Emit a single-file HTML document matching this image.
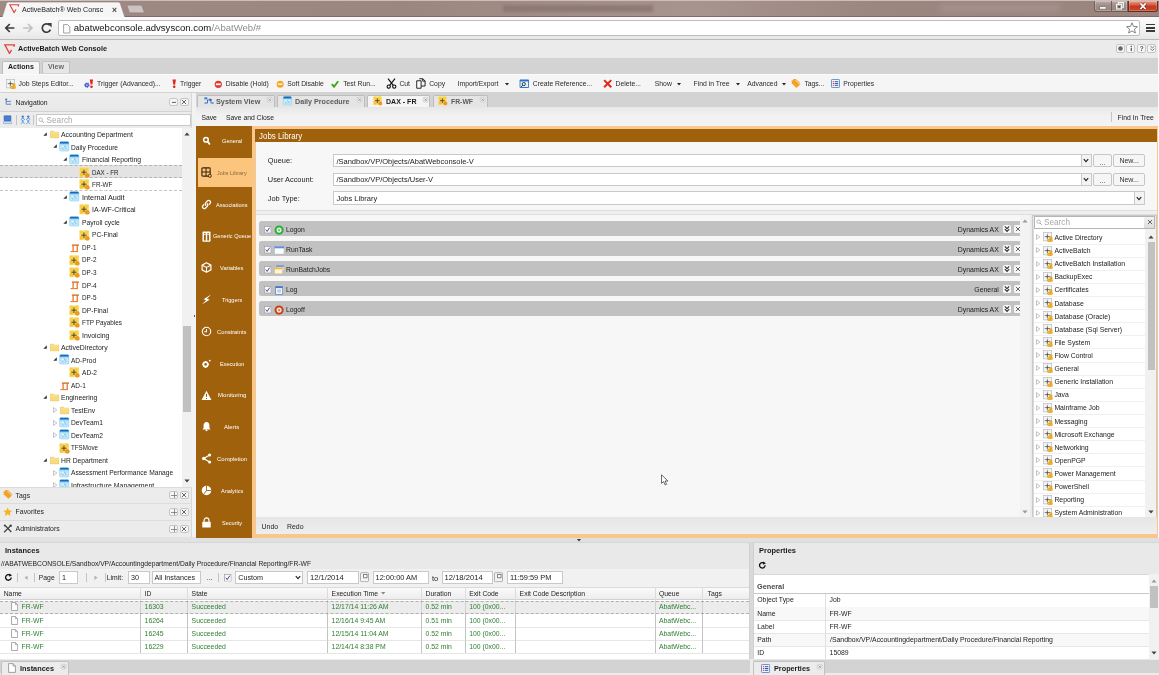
<!DOCTYPE html>
<html><head><meta charset="utf-8"><title>ActiveBatch Web Console</title>
<style>
html,body{margin:0;padding:0;}
body{width:1159px;height:675px;overflow:hidden;position:relative;background:#fff;font-family:"Liberation Sans",sans-serif;font-size:6.8px;color:#222;}
#r{position:absolute;left:0;top:0;width:1159px;height:675px;overflow:hidden;}
#r div,#r span.t,#r svg.i{position:absolute;box-sizing:border-box;}
span.t{white-space:pre;}
svg.i{overflow:visible;}
.btn{background:#f6f6f6;border:1px solid #c6c6c6;border-radius:2px;}
.inp{background:#fff;border:1px solid #c9c9c9;}
</style></head><body>
<svg width="0" height="0" style="position:absolute"><defs>
<linearGradient id="gplan" x1="0" y1="0" x2="0" y2="1"><stop offset="0" stop-color="#bfe3f7"/><stop offset="1" stop-color="#8fcdf0"/></linearGradient>
<symbol id="folder" viewBox="0 0 10 9"><path d="M0.5 1.2 L3.8 1.2 L4.6 2.2 L9.5 2.2 L9.5 8.5 L0.5 8.5 Z" fill="#f8dc7c" stroke="#e3c05a" stroke-width="0.6"/><path d="M0.8 3 H9.2" stroke="#fbeaa8" stroke-width="0.7"/></symbol>
<symbol id="plan" viewBox="0 0 11 11"><rect x="0.2" y="0.2" width="10.6" height="10.6" rx="1.8" fill="#9fdbf5"/><path d="M0.9 2.6 V1.9 Q0.9 0.7 2.1 0.7 H8.9 Q10.1 0.7 10.1 1.9 V2.6 Z" fill="#1969bd"/><rect x="0.9" y="2.6" width="9.2" height="0.6" fill="#3f93d8"/><rect x="1.3" y="3.4" width="8.4" height="6.3" rx="0.5" fill="#c9ebf9"/><rect x="2.3" y="4.3" width="2.9" height="2.6" rx="0.6" fill="#eefaff" stroke="#7fc4ea" stroke-width="0.4"/><rect x="6" y="4.2" width="2.8" height="1.7" fill="#eefaff" stroke="#7fc4ea" stroke-width="0.4"/><path d="M5.2 5.8 H6.8 V8 H8.6 M3.4 7 V8.4 H5.6" stroke="#6ab8e6" stroke-width="0.5" fill="none"/></symbol>
<symbol id="job" viewBox="0 0 10 10"><rect x="0.2" y="0.2" width="9" height="9.2" rx="0.9" fill="#fce58c"/><rect x="0.7" y="0.7" width="3.2" height="3.5" fill="#f9cf45"/><rect x="5.1" y="0.7" width="3.6" height="3.5" fill="#f9cf45"/><rect x="0.7" y="5.4" width="3.2" height="3.5" fill="#f7c433"/><rect x="5.1" y="5.4" width="3.6" height="3.5" fill="#f7c433"/><path d="M4.5 2.2 V7.4 M2 4.8 H7" stroke="#3c2e0c" stroke-width="0.8"/><circle cx="7.7" cy="7.9" r="1.85" fill="#f39a1e" stroke="#dc8412" stroke-width="0.4"/></symbol>
<symbol id="ref" viewBox="0 0 10 9"><rect x="3.2" y="1" width="4.6" height="7" fill="#fff"/><path d="M2 1.1 H9.6" stroke="#c8621e" stroke-width="1.4"/><path d="M3.3 1 V8 M7.7 1 V8" stroke="#e9772c" stroke-width="1.4"/><path d="M0.5 8 H8.4" stroke="#ee7f34" stroke-width="1.4"/></symbol>
<symbol id="lib" viewBox="0 0 10 10"><rect x="0.3" y="0.3" width="8.4" height="8.6" fill="#f4f4f4" stroke="#b4b4b4" stroke-width="0.6"/><path d="M4.4 0.5 V8.8 M0.5 4.6 H8.6" stroke="#c4c4c4" stroke-width="0.7"/><path d="M4.4 2.6 V6.8 M2.2 4.6 H6.8" stroke="#444" stroke-width="0.7"/><circle cx="7.9" cy="5.9" r="1.3" fill="#f9ba2a" stroke="#d18d0a" stroke-width="0.45"/><circle cx="8.2" cy="8.4" r="1.35" fill="#f9ba2a" stroke="#d18d0a" stroke-width="0.45"/><circle cx="5.8" cy="8.4" r="1.35" fill="#f9ba2a" stroke="#d18d0a" stroke-width="0.45"/></symbol>
<symbol id="file" viewBox="0 0 8 10"><path d="M0.6 0.6 H5 L7.4 3 V9.4 H0.6 Z" fill="#fff" stroke="#8a8a8a" stroke-width="0.8"/><path d="M5 0.6 V3 H7.4" fill="none" stroke="#8a8a8a" stroke-width="0.7"/></symbol>
<symbol id="logo" viewBox="0 0 11 10"><path d="M9.6 2.6 L10.4 0.8 H0.8 L5.4 9.2 L7.4 5.8" fill="none" stroke="#e0443a" stroke-width="1.25" stroke-linejoin="miter"/></symbol>
<symbol id="n-search" viewBox="0 0 12 12"><circle cx="5.4" cy="5.2" r="2.5" fill="none" stroke="#fff" stroke-width="1.7"/><path d="M7.2 7.2 L9.2 9.6" stroke="#fff" stroke-width="2" stroke-linecap="round"/></symbol>
<symbol id="n-lib" viewBox="0 0 12 12"><rect x="1" y="1" width="9" height="9" rx="1" fill="none" stroke="#3a2408" stroke-width="1.2"/><path d="M5.5 1 V10 M1 5.5 H10" stroke="#3a2408" stroke-width="1.1"/><circle cx="9.6" cy="9.6" r="1.7" fill="#fbc57d" stroke="#3a2408" stroke-width="1"/></symbol>
<symbol id="n-link" viewBox="0 0 12 12"><path d="M5.2 6.8 a2 2 0 0 1 0 -2.8 l2 -2 a2 2 0 0 1 2.8 2.8 l-1 1" fill="none" stroke="#fff" stroke-width="1.4" stroke-linecap="round"/><path d="M6.8 5.2 a2 2 0 0 1 0 2.8 l-2 2 a2 2 0 0 1 -2.8 -2.8 l1 -1" fill="none" stroke="#fff" stroke-width="1.4" stroke-linecap="round"/></symbol>
<symbol id="n-queue" viewBox="0 0 12 12"><rect x="1.6" y="0.6" width="8.8" height="11" rx="1" fill="#fff"/><rect x="3.2" y="2.4" width="2" height="8" fill="#a0610d"/><rect x="6.8" y="2.4" width="2" height="8" fill="#a0610d"/><rect x="3.2" y="3.6" width="2" height="0.8" fill="#fff"/><rect x="6.8" y="3.6" width="2" height="0.8" fill="#fff"/></symbol>
<symbol id="n-cube" viewBox="0 0 12 12"><path d="M6 0.8 L10.8 3.4 V8.6 L6 11.2 L1.2 8.6 V3.4 Z" fill="none" stroke="#fff" stroke-width="1.3" stroke-linejoin="round"/><path d="M1.4 3.5 L6 6 L10.6 3.5 M6 6 V11" fill="none" stroke="#fff" stroke-width="1.1"/></symbol>
<symbol id="n-bolt" viewBox="0 0 12 12"><path d="M11 0.6 L2.8 5.8 L5.6 6.8 L0.8 11.4 L9.4 6.4 L6.6 5.2 Z" fill="#fff"/></symbol>
<symbol id="n-clock" viewBox="0 0 12 12"><circle cx="6" cy="6" r="4.6" fill="none" stroke="#fff" stroke-width="1.2"/><path d="M6 3.2 V6.2 H3.6" fill="none" stroke="#fff" stroke-width="1.1"/></symbol>
<symbol id="n-gear" viewBox="0 0 12 12"><circle cx="5" cy="7" r="2.4" fill="none" stroke="#fff" stroke-width="1.9"/><circle cx="9.6" cy="2.8" r="1" fill="#fff"/><path d="M5 3.4 V4.4 M5 9.6 V10.6 M1.4 7 H2.4 M7.6 7 H8.6" stroke="#fff" stroke-width="1.4"/></symbol>
<symbol id="n-warn" viewBox="0 0 12 12"><path d="M6 0.8 L11.4 10.8 H0.6 Z" fill="#fff"/><path d="M6 4 V7.6 M6 8.6 V9.8" stroke="#a0610d" stroke-width="1.2"/></symbol>
<symbol id="n-bell" viewBox="0 0 12 12"><path d="M6 1 C3.6 1 2.8 3 2.8 5 V7.6 L1.6 9.2 H10.4 L9.2 7.6 V5 C9.2 3 8.4 1 6 1 Z" fill="#fff"/><circle cx="6" cy="10.2" r="1.1" fill="#fff"/></symbol>
<symbol id="n-share" viewBox="0 0 12 12"><path d="M9.4 2.2 L3 6 L9.4 9.8" fill="none" stroke="#fff" stroke-width="1.4"/><circle cx="9.4" cy="2.2" r="1.7" fill="#fff"/><circle cx="3" cy="6" r="1.9" fill="#fff"/><circle cx="9.4" cy="9.8" r="1.7" fill="#fff"/></symbol>
<symbol id="n-pie" viewBox="0 0 12 12"><circle cx="6" cy="6" r="5.2" fill="#fff"/><path d="M6 0.8 V6 H11.2 M6 6 L3.4 9.6" stroke="#a0610d" stroke-width="1" fill="none"/></symbol>
<symbol id="n-lock" viewBox="0 0 12 12"><rect x="1.4" y="5.2" width="9.2" height="6.2" rx="0.6" fill="#fff"/><path d="M3.4 5.4 V3.6 a2.6 2.6 0 0 1 5.2 0 V5.4" fill="none" stroke="#fff" stroke-width="1.3"/></symbol>
<symbol id="chev2" viewBox="0 0 8 8"><path d="M1.8 1.4 L4 3.6 L6.2 1.4 M1.8 4.2 L4 6.4 L6.2 4.2" fill="none" stroke="#333" stroke-width="1.1"/></symbol>
<symbol id="xx" viewBox="0 0 8 8"><path d="M1.9 1.9 L6.1 6.1 M6.1 1.9 L1.9 6.1" stroke="#4a4a4a" stroke-width="0.85"/></symbol>
<symbol id="plus" viewBox="0 0 8 8"><path d="M4 1.4 V6.6 M1.4 4 H6.6" stroke="#666" stroke-width="0.7" shape-rendering="crispEdges"/></symbol>
<symbol id="minus" viewBox="0 0 8 8"><path d="M2 4.4 H6" stroke="#555" stroke-width="0.9"/></symbol>
<symbol id="chk" viewBox="0 0 8 8"><rect x="0.4" y="0.4" width="7.2" height="7.2" fill="#f8f8f8" stroke="#9a9a9a" stroke-width="0.7"/><path d="M1.9 4 L3.4 5.9 L6.1 1.8" fill="none" stroke="#2a3f9c" stroke-width="1"/></symbol>
<symbol id="refresh" viewBox="0 0 10 10"><path d="M8.2 5 a3.2 3.2 0 1 1 -1.2 -2.5" fill="none" stroke="#111" stroke-width="1.5"/><path d="M5.8 0.6 L9.2 2.6 L6 4.4 Z" fill="#111"/></symbol>
<symbol id="mag" viewBox="0 0 8 8"><circle cx="3.2" cy="3.2" r="2.1" fill="none" stroke="#999" stroke-width="0.8"/><path d="M4.8 4.8 L7.2 7.2" stroke="#999" stroke-width="1"/></symbol>
<symbol id="combo" viewBox="0 0 10 13"><path d="M2.8 5.2 L5 7.6 L7.2 5.2" fill="none" stroke="#222" stroke-width="1.2"/></symbol>
<symbol id="cal" viewBox="0 0 9 10"><rect x="0.5" y="0.5" width="8" height="9" rx="1" fill="#f4f4f4" stroke="#9c9c9c" stroke-width="0.8"/><rect x="3.6" y="2.2" width="3.4" height="3.4" fill="#fff" stroke="#666" stroke-width="0.8"/></symbol>
<symbol id="cursor" viewBox="0 0 9 13"><path d="M0.6 0.6 V10 L2.8 8 L4.6 11.8 L6.2 11 L4.4 7.4 H7.6 Z" fill="#fff" stroke="#333" stroke-width="0.8" stroke-linejoin="round"/></symbol>
<symbol id="ti-steps" viewBox="0 0 10 10"><use href="#lib"/></symbol>
<symbol id="ti-trigadv" viewBox="0 0 10 10"><circle cx="3" cy="6.4" r="2.2" fill="#4d63d2" stroke="#4d63d2" stroke-width="1.2" stroke-dasharray="1.1 0.9"/><circle cx="3" cy="6.4" r="0.9" fill="#aab6ee"/><path d="M6 0.5 H9.4 L8.7 5.8 H6.9 Z" fill="#e3261a"/><circle cx="7.8" cy="8.1" r="1.35" fill="#e3261a"/></symbol>
<symbol id="ti-trig" viewBox="0 0 4.4 10"><path d="M0.4 0.4 H4 L3.2 6 H1.3 Z" fill="#e3261a"/><circle cx="2.2" cy="8.3" r="1.4" fill="#e3261a"/></symbol>
<symbol id="ti-dis" viewBox="0 0 10 10"><circle cx="5" cy="5" r="4.2" fill="#e03a34"/><rect x="2.2" y="4" width="5.6" height="2" fill="#fff"/></symbol>
<symbol id="ti-soft" viewBox="0 0 10 10"><circle cx="5" cy="5" r="4.2" fill="#f5a623"/><rect x="2.2" y="4" width="5.6" height="2" fill="#fdf0d0"/></symbol>
<symbol id="ti-check" viewBox="0 0 10 10"><path d="M1 5.2 L3.8 8.4 L9 1.6" fill="none" stroke="#38a616" stroke-width="2.3"/></symbol>
<symbol id="ti-cut" viewBox="0 0 12 12"><path d="M2.2 0.8 L8 8 M9.8 0.8 L4 8" stroke="#111" stroke-width="1.3"/><circle cx="3" cy="9.4" r="1.8" fill="none" stroke="#111" stroke-width="1.2"/><circle cx="9" cy="9.4" r="1.8" fill="none" stroke="#111" stroke-width="1.2"/></symbol>
<symbol id="ti-copy" viewBox="0 0 11 12"><path d="M0.8 3 H5.6 V11.2 H0.8 Z" fill="#fff" stroke="#111" stroke-width="1"/><path d="M3.6 0.8 H7.6 L10 3.2 V8.8 H5.8 M7.4 0.8 V3.4 H10" fill="none" stroke="#111" stroke-width="1"/></symbol>
<symbol id="ti-ref" viewBox="0 0 11 10"><rect x="0.5" y="0.5" width="10" height="9" rx="1" fill="#2a6fc0"/><rect x="1.4" y="2.6" width="8.2" height="6" fill="#e8f1fb"/><circle cx="5" cy="5.4" r="1.7" fill="none" stroke="#123" stroke-width="0.9"/><path d="M3.8 6.6 L2.2 8.4" stroke="#123" stroke-width="1"/></symbol>
<symbol id="ti-del" viewBox="0 0 10 10"><path d="M1.2 1.2 L8.8 8.8 M8.8 1.2 L1.2 8.8" stroke="#e02a1a" stroke-width="2.2"/></symbol>
<symbol id="ti-tags" viewBox="0 0 10 10"><path d="M0.6 1.6 L4 0.8 L9.4 6 L5.6 9.4 L0.8 4.4 Z" fill="#f5a21e"/><path d="M2.4 0.6 L5 0.4 L9.8 5" fill="none" stroke="#e88a10" stroke-width="0.9"/></symbol>
<symbol id="ti-props" viewBox="0 0 10 10"><rect x="0.5" y="0.5" width="9" height="9" rx="0.9" fill="#f2f5fc" stroke="#4a72c0" stroke-width="0.9"/><path d="M2 3 H3.3 M2 5 H3.3 M2 7 H3.3" stroke="#d03a3a" stroke-width="1.1"/><path d="M4.1 3 H8 M4.1 5 H8 M4.1 7 H8" stroke="#2f55b0" stroke-width="1.1"/></symbol>
<symbol id="ti-star" viewBox="0 0 10 10"><path d="M5 0.4 L6.4 3.6 L9.8 3.9 L7.2 6.2 L8 9.6 L5 7.8 L2 9.6 L2.8 6.2 L0.2 3.9 L3.6 3.6 Z" fill="#f8b21c"/></symbol>
<symbol id="ti-admin" viewBox="0 0 10 10"><path d="M1.2 8.8 L8 2 M2 1.4 L8.8 8.6" stroke="#444" stroke-width="1.4"/><circle cx="8.2" cy="1.8" r="1.3" fill="#444"/><circle cx="1.8" cy="1.6" r="1" fill="#444"/></symbol>
<symbol id="ti-nav" viewBox="0 0 8 9"><path d="M1.4 0.6 V7 H6 M1.4 3.6 H6" fill="none" stroke="#3a64b8" stroke-width="0.9"/><rect x="0.4" y="0.2" width="2.2" height="1.6" fill="#3a64b8"/><rect x="5" y="2.8" width="2.4" height="1.6" fill="#7aa0dc"/><rect x="5" y="6.2" width="2.4" height="1.6" fill="#7aa0dc"/></symbol>
<symbol id="ti-comp" viewBox="0 0 10 10"><rect x="1.2" y="0.6" width="7.6" height="5.8" rx="0.6" fill="#4a7ed0" stroke="#2f5aa8" stroke-width="0.6"/><rect x="0.4" y="7.2" width="9.2" height="2.2" rx="0.8" fill="#dfe8f6" stroke="#5a82c8" stroke-width="0.6"/></symbol>
<symbol id="ti-people" viewBox="0 0 12 10"><circle cx="3" cy="1.6" r="1.3" fill="#3d7fd0"/><circle cx="9" cy="1.6" r="1.3" fill="#3d7fd0"/><path d="M0.8 5 L3 3.2 L5.2 5 M6.8 5 L9 3.2 L11.2 5" fill="none" stroke="#3d7fd0" stroke-width="1"/><circle cx="3" cy="6.4" r="1.2" fill="#5a9ae0"/><circle cx="9" cy="6.4" r="1.2" fill="#5a9ae0"/><path d="M0.8 9.6 L3 7.8 L5.2 9.6 M6.8 9.6 L9 7.8 L11.2 9.6" fill="none" stroke="#5a9ae0" stroke-width="1"/></symbol>
<symbol id="ti-sysview" viewBox="0 0 12 10"><path d="M1 7.6 H4 V4 H8 V7.6 H11" fill="none" stroke="#2a5fb4" stroke-width="1"/><rect x="0.4" y="1" width="3.4" height="2.4" fill="#3d7fd0"/><path d="M6.4 2 L9.6 3.8 L6.4 5.6 Z" fill="#2a5fb4"/><rect x="0.6" y="6.6" width="3" height="2" fill="#7aa8e4"/><rect x="8.4" y="6.6" width="3" height="2" fill="#7aa8e4"/></symbol>
<symbol id="s-on" viewBox="0 0 10 10"><circle cx="5" cy="5" r="4.5" fill="#2cae3c"/><circle cx="5" cy="5" r="2.5" fill="#dff5df"/><path d="M3.6 4.4 L5 6.2 L6.4 4.4 Z" fill="#2cae3c"/></symbol>
<symbol id="s-off" viewBox="0 0 10 10"><circle cx="5" cy="5" r="4.5" fill="#c8431c"/><circle cx="5" cy="5" r="2.5" fill="#fbe6dc"/><path d="M3.6 4.4 L5 6.2 L6.4 4.4 Z" fill="#c8431c"/></symbol>
<symbol id="s-task" viewBox="0 0 11 9"><rect x="0.4" y="0.4" width="10.2" height="8.2" rx="0.8" fill="#fdfdfd" stroke="#9ab0d0" stroke-width="0.6"/><rect x="0.4" y="0.4" width="10.2" height="2" fill="#5d8fdc"/></symbol>
<symbol id="s-batch" viewBox="0 0 11 10"><rect x="2.4" y="0.4" width="8" height="6" fill="#fdfdfd" stroke="#9ab0d0" stroke-width="0.5"/><rect x="2.4" y="0.4" width="8" height="1.6" fill="#5d8fdc"/><rect x="0.4" y="2.8" width="8.6" height="6.6" fill="#fff6dc" stroke="#d8b060" stroke-width="0.5"/><rect x="0.4" y="2.8" width="8.6" height="1.8" fill="#f5b93c"/></symbol>
<symbol id="s-log" viewBox="0 0 9 10"><rect x="0.5" y="0.5" width="8" height="9" rx="0.6" fill="#f2f6fc" stroke="#4a78c8" stroke-width="0.8"/><rect x="0.5" y="0.5" width="8" height="1.8" fill="#4a78c8"/><path d="M2.4 4.6 H6.6 M2.4 6.6 H6.6" stroke="#7a9ad4" stroke-width="0.8"/></symbol>
</defs></svg>
<div id="r">
<div style="left:0.00px;top:0.00px;width:1159.00px;height:17.20px;background:linear-gradient(90deg,#a08983 0%,#9b8680 35%,#a8948e 60%,#9b8680 75%,#9a847e 100%);"></div>
<div style="left:0.00px;top:0.00px;width:1159.00px;height:1.00px;background:#cbbfbb;"></div>
<div style="left:0.00px;top:16.10px;width:1159.00px;height:0.90px;background:#7d6c68;"></div>
<div style="left:503.00px;top:5.00px;width:150.00px;height:7.00px;background:#8b7771;filter:blur(1.6px);opacity:0.85;"></div>
<div style="left:940.00px;top:4.00px;width:120.00px;height:8.00px;background:#a89690;filter:blur(3px);opacity:0.8;"></div>
<svg class="i" style="left:0;top:0" width="150" height="18"><path d="M2 17.6 L6.5 3.2 Q7 2 8.5 2 L118 2 Q119.6 2 120.2 3.2 L125 17.6" fill="#f6f6f6" stroke="#8a7a76" stroke-width="0.6"/><path d="M127 5.2 L140.6 5.2 Q141.6 5.2 142 6.2 L144.4 12.8 L130.6 12.8 Q129.6 12.8 129.2 11.8 Z" fill="#cbc4c2" stroke="#8d7f7b" stroke-width="0.5"/></svg>
<svg class="i" style="left:8.60px;top:4.40px;" width="10.40" height="9.40"><use href="#logo"/></svg>
<span class="t" style="left:22.00px;top:5.88px;font-size:7.1px;line-height:9.23px;color:#222;">ActiveBatch® Web Consc</span>
<span class="t" style="left:112.00px;top:4.97px;font-size:8.5px;line-height:11.05px;color:#444;font-weight:bold;">×</span>
<div style="left:1094.00px;top:0.80px;width:34.00px;height:11.60px;background:linear-gradient(#b9a9a4,#a08d88 45%,#978580);border:1px solid #6e5f5b;border-top:none;border-radius:0 0 0 3px;box-shadow:inset 0 0 0 0.7px rgba(255,255,255,0.35);"></div>
<div style="left:1111.00px;top:0.80px;width:1.00px;height:11.40px;background:#6e5f5b;"></div>
<svg class="i" style="left:1094px;top:0" width="64" height="13"><rect x="5.6" y="6.6" width="6.6" height="2.6" rx="0.6" fill="#fff" stroke="#5a4c48" stroke-width="0.6"/><rect x="24.4" y="2.6" width="5" height="4.6" fill="none" stroke="#f4f4f4" stroke-width="1.1"/><rect x="22.6" y="4.4" width="5" height="4.6" fill="#a59590" stroke="#f4f4f4" stroke-width="1.1"/><rect x="24.3" y="6" width="1.6" height="1.6" fill="#4a3e3a"/></svg>
<div style="left:1128.00px;top:0.80px;width:29.60px;height:11.60px;background:linear-gradient(#e9a08c,#d9593c 40%,#c23a1f 55%,#c9492c);border:1px solid #6e2a20;border-top:none;border-radius:0 0 3px 0;box-shadow:inset 0 0 0 0.7px rgba(255,255,255,0.3);"></div>
<svg class="i" style="left:1128px;top:0" width="30" height="13"><path d="M12.4 3.4 L17.6 9 M17.6 3.4 L12.4 9" stroke="#5a2018" stroke-width="2.8"/><path d="M12.4 3.4 L17.6 9 M17.6 3.4 L12.4 9" stroke="#fff" stroke-width="1.8"/></svg>
<div style="left:0.00px;top:16.90px;width:1159.00px;height:23.10px;background:linear-gradient(#fafafa,#f1f1f1 60%,#e6e6e6);"></div>
<div style="left:0.00px;top:39.40px;width:1159.00px;height:0.90px;background:#b9b9b9;"></div>
<svg class="i" style="left:0;top:17px" width="60" height="23"><path d="M5.8 11 H14.4 M9.8 7 L5.8 11 L9.8 15" fill="none" stroke="#3c3c3c" stroke-width="1.7"/><path d="M23 11 H32 M28 7 L32 11 L28 15" fill="none" stroke="#c2c2c2" stroke-width="1.7"/><path d="M49.6 8.2 A4.2 4.2 0 1 0 50.4 12.6" fill="none" stroke="#3c3c3c" stroke-width="1.7"/><path d="M47.2 6 L51.6 6 L51.6 10.6 Z" fill="#3c3c3c"/></svg>
<div style="left:58.00px;top:19.60px;width:1081.60px;height:16.40px;background:#fff;border:1px solid #bdbdbd;border-radius:2px;"></div>
<svg class="i" style="left:62.5px;top:23.5px" width="8" height="10"><path d="M0.6 0.6 H4.6 L6.8 2.8 V9 H0.6 Z" fill="#fff" stroke="#8c8c8c" stroke-width="0.8"/></svg>
<span class="t" style="left:73.80px;top:21.99px;font-size:9.55px;line-height:12.42px;color:#111;">abatwebconsole.advsyscon.com</span>
<span class="t" style="left:211.40px;top:21.99px;font-size:9.55px;line-height:12.42px;color:#8c8c8c;">/AbatWeb/#</span>
<svg class="i" style="left:1125.5px;top:22px" width="12" height="12"><path d="M6 0.8 L7.5 4.4 L11.4 4.7 L8.4 7.2 L9.4 11 L6 8.9 L2.6 11 L3.6 7.2 L0.6 4.7 L4.5 4.4 Z" fill="#fff" stroke="#666" stroke-width="0.8"/></svg>
<div style="left:1146.40px;top:23.60px;width:8.20px;height:1.70px;background:#3a3a3a;"></div>
<div style="left:1146.40px;top:26.90px;width:8.20px;height:1.70px;background:#3a3a3a;"></div>
<div style="left:1146.40px;top:30.10px;width:8.20px;height:1.70px;background:#3a3a3a;"></div>
<div style="left:0.00px;top:40.30px;width:1159.00px;height:17.90px;background:#ebebeb;"></div>
<svg class="i" style="left:4.00px;top:43.60px;" width="11.20" height="10.20"><use href="#logo"/></svg>
<span class="t" style="left:18.00px;top:43.92px;font-size:7.2px;line-height:9.36px;color:#1a1a1a;font-weight:bold;transform:scaleX(1.0007);transform-origin:0 50%;">ActiveBatch Web Console</span>
<div class="btn" style="left:1115.50px;top:44.40px;width:9.00px;height:9.00px;"></div>
<div class="btn" style="left:1126.30px;top:44.40px;width:9.00px;height:9.00px;"></div>
<div class="btn" style="left:1136.80px;top:44.40px;width:9.00px;height:9.00px;"></div>
<div class="btn" style="left:1147.40px;top:44.40px;width:9.00px;height:9.00px;"></div>
<svg class="i" style="left:1115.5px;top:44.4px" width="42" height="9"><circle cx="4.5" cy="4.5" r="2.3" fill="#666"/><path d="M15.3 1.8 V3 M15.3 3.8 V7" stroke="#555" stroke-width="1.2"/><text x="23.8" y="7" font-size="6.4" font-weight="bold" fill="#555" font-family="Liberation Sans">?</text><path d="M34.4 2.2 L36.4 3.8 L38.4 2.2 M34.4 4.8 L36.4 6.4 L38.4 4.8" fill="none" stroke="#555" stroke-width="0.8"/></svg>
<div style="left:0.00px;top:58.20px;width:1157.60px;height:16.00px;background:#d3d3d3;"></div>
<div style="left:2.00px;top:60.60px;width:37.60px;height:13.20px;background:#f5f5f5;border:1px solid #bcbcbc;border-bottom:none;border-radius:2px 2px 0 0;"></div>
<span class="t" style="left:8.00px;top:62.02px;font-size:7.2px;line-height:9.36px;color:#1a1a1a;font-weight:bold;transform:scaleX(0.9788);transform-origin:0 50%;">Actions</span>
<div style="left:42.00px;top:61.20px;width:28.00px;height:12.30px;background:#e6e6e6;border:1px solid #c2c2c2;border-bottom:none;border-radius:2px 2px 0 0;"></div>
<span class="t" style="left:48.00px;top:62.02px;font-size:7.2px;line-height:9.36px;color:#6a6a6a;font-weight:bold;transform:scaleX(0.9846);transform-origin:0 50%;">View</span>
<div style="left:0.00px;top:74.10px;width:1157.60px;height:18.30px;background:#f5f5f5;border-top:1px solid #fbfbfb;"></div>
<svg class="i" style="left:6.00px;top:78.80px;" width="10.00" height="10.00"><use href="#lib"/></svg>
<span class="t" style="left:18.60px;top:80.28px;font-size:6.8px;line-height:8.84px;color:#2a2a2a;">Job Steps Editor...</span>
<svg class="i" style="left:84.40px;top:79.00px;" width="9.60" height="9.60"><use href="#ti-trigadv"/></svg>
<span class="t" style="left:97.00px;top:80.28px;font-size:6.8px;line-height:8.84px;color:#2a2a2a;">Trigger (Advanced)...</span>
<svg class="i" style="left:172.00px;top:79.10px;" width="4.40" height="9.40"><use href="#ti-trig"/></svg>
<span class="t" style="left:180.00px;top:80.28px;font-size:6.8px;line-height:8.84px;color:#2a2a2a;">Trigger</span>
<svg class="i" style="left:213.80px;top:79.50px;" width="8.60" height="8.60"><use href="#ti-dis"/></svg>
<span class="t" style="left:225.80px;top:80.28px;font-size:6.8px;line-height:8.84px;color:#2a2a2a;">Disable (Hold)</span>
<svg class="i" style="left:275.60px;top:79.60px;" width="8.40" height="8.40"><use href="#ti-soft"/></svg>
<span class="t" style="left:287.20px;top:80.28px;font-size:6.8px;line-height:8.84px;color:#2a2a2a;">Soft Disable</span>
<svg class="i" style="left:331.40px;top:79.80px;" width="8.00" height="8.00"><use href="#ti-check"/></svg>
<span class="t" style="left:343.20px;top:80.28px;font-size:6.8px;line-height:8.84px;color:#2a2a2a;">Test Run...</span>
<svg class="i" style="left:385.60px;top:78.30px;" width="11.00" height="11.00"><use href="#ti-cut"/></svg>
<span class="t" style="left:399.40px;top:80.28px;font-size:6.8px;line-height:8.84px;color:#2a2a2a;">Cut</span>
<svg class="i" style="left:416.00px;top:78.30px;" width="10.00" height="11.00"><use href="#ti-copy"/></svg>
<span class="t" style="left:429.20px;top:80.28px;font-size:6.8px;line-height:8.84px;color:#2a2a2a;">Copy</span>
<span class="t" style="left:457.60px;top:80.28px;font-size:6.8px;line-height:8.84px;color:#2a2a2a;">Import/Export</span>
<svg class="i" style="left:519.00px;top:79.10px;" width="10.60" height="9.40"><use href="#ti-ref"/></svg>
<span class="t" style="left:532.80px;top:80.28px;font-size:6.8px;line-height:8.84px;color:#2a2a2a;">Create Reference...</span>
<svg class="i" style="left:603.00px;top:79.10px;" width="9.40" height="9.40"><use href="#ti-del"/></svg>
<span class="t" style="left:615.60px;top:80.28px;font-size:6.8px;line-height:8.84px;color:#2a2a2a;">Delete...</span>
<span class="t" style="left:654.80px;top:80.28px;font-size:6.8px;line-height:8.84px;color:#2a2a2a;">Show</span>
<span class="t" style="left:693.60px;top:80.28px;font-size:6.8px;line-height:8.84px;color:#2a2a2a;">Find in Tree</span>
<span class="t" style="left:747.20px;top:80.28px;font-size:6.8px;line-height:8.84px;color:#2a2a2a;">Advanced</span>
<svg class="i" style="left:791.20px;top:79.00px;" width="9.60" height="9.60"><use href="#ti-tags"/></svg>
<span class="t" style="left:804.40px;top:80.28px;font-size:6.8px;line-height:8.84px;color:#2a2a2a;">Tags...</span>
<svg class="i" style="left:830.80px;top:79.30px;" width="9.00" height="9.00"><use href="#ti-props"/></svg>
<span class="t" style="left:843.20px;top:80.28px;font-size:6.8px;line-height:8.84px;color:#2a2a2a;">Properties</span>
<svg class="i" style="left:505.4px;top:83.0px" width="4" height="3"><path d="M0 0 H4 L2 2.4 Z" fill="#222"/></svg>
<svg class="i" style="left:676.6px;top:83.0px" width="4" height="3"><path d="M0 0 H4 L2 2.4 Z" fill="#222"/></svg>
<svg class="i" style="left:735.6px;top:83.0px" width="4" height="3"><path d="M0 0 H4 L2 2.4 Z" fill="#222"/></svg>
<svg class="i" style="left:782.0px;top:83.0px" width="4" height="3"><path d="M0 0 H4 L2 2.4 Z" fill="#222"/></svg>
<div style="left:0.00px;top:92.40px;width:1157.60px;height:15.80px;background:#d3d3d3;"></div>
<div style="left:0.00px;top:92.50px;width:196.00px;height:35.50px;background:#f2f2f2;"></div>
<div style="left:0.00px;top:93.20px;width:192.20px;height:18.60px;background:linear-gradient(#eeeeee,#e8e8e8);border-bottom:1px solid #d2d2d2;border-right:1px solid #d8d8d8;"></div>
<svg class="i" style="left:4.80px;top:98.20px;" width="6.60" height="8.40"><use href="#ti-nav"/></svg>
<span class="t" style="left:15.50px;top:98.98px;font-size:6.8px;line-height:8.84px;color:#222;">Navigation</span>
<div class="btn" style="left:169.40px;top:98.30px;width:8.40px;height:8.20px;"></div>
<svg class="i" style="left:169.60px;top:98.40px;" width="8.00" height="8.00"><use href="#minus"/></svg>
<div class="btn" style="left:180.00px;top:98.30px;width:8.60px;height:8.20px;"></div>
<svg class="i" style="left:180.30px;top:98.40px;" width="8.00" height="8.00"><use href="#xx"/></svg>
<div style="left:0.00px;top:111.80px;width:192.20px;height:16.00px;background:#ececec;border-right:1px solid #d8d8d8;"></div>
<svg class="i" style="left:3.40px;top:115.00px;" width="9.00" height="9.40"><use href="#ti-comp"/></svg>
<div style="left:16.40px;top:115.00px;width:0.80px;height:9.60px;background:#c4c4c4;"></div>
<svg class="i" style="left:19.60px;top:115.00px;" width="11.00" height="9.40"><use href="#ti-people"/></svg>
<div style="left:33.00px;top:115.00px;width:0.80px;height:9.60px;background:#c4c4c4;"></div>
<div class="inp" style="left:36.40px;top:114.20px;width:154.40px;height:11.60px;"></div>
<svg class="i" style="left:38.40px;top:116.60px;" width="6.60" height="6.60"><use href="#mag"/></svg>
<span class="t" style="left:46.60px;top:115.57px;font-size:8.2px;line-height:10.66px;color:#a8a8a8;">Search</span>
<div style="left:197.40px;top:94.80px;width:77.40px;height:13.60px;background:#e5e5e5;border:1px solid #bdbdbd;border-bottom:none;border-radius:2px 2px 0 0;"></div>
<svg class="i" style="left:204.00px;top:95.80px;" width="10.40" height="9.60"><use href="#ti-sysview"/></svg>
<span class="t" style="left:215.70px;top:96.82px;font-size:7.2px;line-height:9.36px;color:#5a5a5a;font-weight:bold;transform:scaleX(1.0108);transform-origin:0 50%;">System View</span>
<svg class="i" style="left:267.0px;top:97.4px" width="5.4" height="5.4"><rect x="0.3" y="0.3" width="4.8" height="4.8" rx="0.8" fill="#eee" stroke="#bbb" stroke-width="0.5"/><path d="M1.5 1.5 L3.9 3.9 M3.9 1.5 L1.5 3.9" stroke="#777" stroke-width="0.6"/></svg>
<div style="left:277.00px;top:94.80px;width:88.00px;height:13.60px;background:#e5e5e5;border:1px solid #bdbdbd;border-bottom:none;border-radius:2px 2px 0 0;"></div>
<svg class="i" style="left:282.30px;top:95.80px;" width="10.80" height="9.60"><use href="#plan"/></svg>
<span class="t" style="left:295.30px;top:96.82px;font-size:7.2px;line-height:9.36px;color:#5a5a5a;font-weight:bold;transform:scaleX(0.9939);transform-origin:0 50%;">Daily Procedure</span>
<svg class="i" style="left:357.0px;top:97.4px" width="5.4" height="5.4"><rect x="0.3" y="0.3" width="4.8" height="4.8" rx="0.8" fill="#eee" stroke="#bbb" stroke-width="0.5"/><path d="M1.5 1.5 L3.9 3.9 M3.9 1.5 L1.5 3.9" stroke="#777" stroke-width="0.6"/></svg>
<div style="left:367.00px;top:94.80px;width:63.00px;height:13.60px;background:#f4f4f4;border:1px solid #bdbdbd;border-bottom:none;border-radius:2px 2px 0 0;"></div>
<svg class="i" style="left:373.00px;top:95.80px;" width="9.60" height="9.60"><use href="#job"/></svg>
<span class="t" style="left:385.50px;top:96.82px;font-size:7.2px;line-height:9.36px;color:#1a1a1a;font-weight:bold;transform:scaleX(0.9789);transform-origin:0 50%;">DAX - FR</span>
<svg class="i" style="left:422.8px;top:97.4px" width="5.4" height="5.4"><rect x="0.3" y="0.3" width="4.8" height="4.8" rx="0.8" fill="#eee" stroke="#bbb" stroke-width="0.5"/><path d="M1.5 1.5 L3.9 3.9 M3.9 1.5 L1.5 3.9" stroke="#777" stroke-width="0.6"/></svg>
<div style="left:432.80px;top:94.80px;width:55.00px;height:13.60px;background:#e5e5e5;border:1px solid #bdbdbd;border-bottom:none;border-radius:2px 2px 0 0;"></div>
<svg class="i" style="left:438.40px;top:95.80px;" width="9.60" height="9.60"><use href="#job"/></svg>
<span class="t" style="left:451.00px;top:96.82px;font-size:7.2px;line-height:9.36px;color:#5a5a5a;font-weight:bold;transform:scaleX(0.9501);transform-origin:0 50%;">FR-WF</span>
<svg class="i" style="left:480.2px;top:97.4px" width="5.4" height="5.4"><rect x="0.3" y="0.3" width="4.8" height="4.8" rx="0.8" fill="#eee" stroke="#bbb" stroke-width="0.5"/><path d="M1.5 1.5 L3.9 3.9 M3.9 1.5 L1.5 3.9" stroke="#777" stroke-width="0.6"/></svg>
<div style="left:196.00px;top:106.90px;width:961.60px;height:1.50px;background:#e7e7e7;"></div>
<div style="left:196.00px;top:108.20px;width:961.60px;height:17.40px;background:linear-gradient(#e9e9e9,#f1f1f1 40%,#f4f4f4);"></div>
<span class="t" style="left:201.40px;top:114.08px;font-size:6.8px;line-height:8.84px;color:#222;">Save</span>
<span class="t" style="left:226.00px;top:114.08px;font-size:6.8px;line-height:8.84px;color:#222;">Save and Close</span>
<div style="left:1111.00px;top:112.40px;width:0.80px;height:9.60px;background:#c4c4c4;"></div>
<span class="t" style="left:1117.60px;top:114.08px;font-size:6.8px;line-height:8.84px;color:#222;">Find In Tree</span>
<div style="left:0.00px;top:127.80px;width:181.60px;height:358.80px;background:#fff;"></div>
<div style="left:181.60px;top:127.80px;width:10.60px;height:358.80px;background:#f1f1f1;"></div>
<div style="left:183.00px;top:326.00px;width:8.00px;height:85.80px;background:#c1c1c1;"></div>
<svg class="i" style="left:184px;top:132.4px" width="6" height="4"><path d="M0.4 3.4 L3 0.6 L5.6 3.4 Z" fill="#444"/></svg>
<svg class="i" style="left:184px;top:479.4px" width="6" height="4"><path d="M0.4 0.6 L3 3.4 L5.6 0.6 Z" fill="#444"/></svg>
<div style="left:192.20px;top:127.80px;width:3.80px;height:410.00px;background:#f2f2f2;"></div>
<div style="left:193.60px;top:315.40px;width:0.90px;height:1.60px;background:#555;"></div>
<div style="left:0.00px;top:165.19px;width:181.60px;height:12.70px;background:#e3e3e3;border-top:1px dashed #b4b4b4;border-bottom:1px dashed #b4b4b4;"></div>
<div style="left:0.00px;top:190.22px;width:181.60px;height:1.00px;border-top:1px dashed #c4c4c4;"></div>
<div style="left:0;top:127.8px;width:181.6px;height:358.8px;overflow:hidden;">
<svg class="i" style="left:49.80px;top:2.10px;" width="9.40" height="8.60"><use href="#folder"/></svg>
<span class="t" style="left:61.40px;top:3.35px;font-size:6.85px;line-height:8.90px;color:#222;transform:scaleX(1.0038);transform-origin:0 50%;">Accounting Department</span>
<svg class="i" style="left:43.2px;top:4.1px" width="4.2" height="4.2"><path d="M3.8 0.3 V3.8 H0.3 Z" fill="#333"/></svg>
<svg class="i" style="left:59.30px;top:13.23px;" width="10.60" height="10.80"><use href="#plan"/></svg>
<span class="t" style="left:71.45px;top:15.88px;font-size:6.85px;line-height:8.90px;color:#222;transform:scaleX(0.9661);transform-origin:0 50%;">Daily Procedure</span>
<svg class="i" style="left:53.1px;top:16.6px" width="4.2" height="4.2"><path d="M3.8 0.3 V3.8 H0.3 Z" fill="#333"/></svg>
<svg class="i" style="left:69.20px;top:25.76px;" width="10.60" height="10.80"><use href="#plan"/></svg>
<span class="t" style="left:81.50px;top:28.41px;font-size:6.85px;line-height:8.90px;color:#222;transform:scaleX(1.0039);transform-origin:0 50%;">Financial Reporting</span>
<svg class="i" style="left:63.0px;top:29.2px" width="4.2" height="4.2"><path d="M3.8 0.3 V3.8 H0.3 Z" fill="#333"/></svg>
<svg class="i" style="left:78.90px;top:39.09px;" width="11.00" height="10.80"><use href="#job"/></svg>
<span class="t" style="left:91.55px;top:40.94px;font-size:6.85px;line-height:8.90px;color:#222;transform:scaleX(0.9033);transform-origin:0 50%;">DAX - FR</span>
<svg class="i" style="left:78.90px;top:51.62px;" width="11.00" height="10.80"><use href="#job"/></svg>
<span class="t" style="left:91.55px;top:53.47px;font-size:6.85px;line-height:8.90px;color:#222;transform:scaleX(0.9276);transform-origin:0 50%;">FR-WF</span>
<svg class="i" style="left:69.20px;top:63.35px;" width="10.60" height="10.80"><use href="#plan"/></svg>
<span class="t" style="left:81.50px;top:66.00px;font-size:6.85px;line-height:8.90px;color:#222;transform:scaleX(1.0637);transform-origin:0 50%;">Internal Audit</span>
<svg class="i" style="left:63.0px;top:66.8px" width="4.2" height="4.2"><path d="M3.8 0.3 V3.8 H0.3 Z" fill="#333"/></svg>
<svg class="i" style="left:78.90px;top:76.68px;" width="11.00" height="10.80"><use href="#job"/></svg>
<span class="t" style="left:91.55px;top:78.53px;font-size:6.85px;line-height:8.90px;color:#222;transform:scaleX(1.0252);transform-origin:0 50%;">IA-WF-Critical</span>
<svg class="i" style="left:69.20px;top:88.41px;" width="10.60" height="10.80"><use href="#plan"/></svg>
<span class="t" style="left:81.50px;top:91.06px;font-size:6.85px;line-height:8.90px;color:#222;transform:scaleX(0.9838);transform-origin:0 50%;">Payroll cycle</span>
<svg class="i" style="left:63.0px;top:91.8px" width="4.2" height="4.2"><path d="M3.8 0.3 V3.8 H0.3 Z" fill="#333"/></svg>
<svg class="i" style="left:78.90px;top:101.74px;" width="11.00" height="10.80"><use href="#job"/></svg>
<span class="t" style="left:91.55px;top:103.59px;font-size:6.85px;line-height:8.90px;color:#222;transform:scaleX(0.9709);transform-origin:0 50%;">PC-Final</span>
<svg class="i" style="left:69.70px;top:115.97px;" width="9.40" height="8.60"><use href="#ref"/></svg>
<span class="t" style="left:81.50px;top:116.12px;font-size:6.85px;line-height:8.90px;color:#222;transform:scaleX(0.9234);transform-origin:0 50%;">DP-1</span>
<svg class="i" style="left:69.00px;top:126.80px;" width="11.00" height="10.80"><use href="#job"/></svg>
<span class="t" style="left:81.50px;top:128.65px;font-size:6.85px;line-height:8.90px;color:#222;transform:scaleX(0.9299);transform-origin:0 50%;">DP-2</span>
<svg class="i" style="left:69.00px;top:139.33px;" width="11.00" height="10.80"><use href="#job"/></svg>
<span class="t" style="left:81.50px;top:141.18px;font-size:6.85px;line-height:8.90px;color:#222;transform:scaleX(0.9299);transform-origin:0 50%;">DP-3</span>
<svg class="i" style="left:69.70px;top:153.56px;" width="9.40" height="8.60"><use href="#ref"/></svg>
<span class="t" style="left:81.50px;top:153.71px;font-size:6.85px;line-height:8.90px;color:#222;transform:scaleX(0.9427);transform-origin:0 50%;">DP-4</span>
<svg class="i" style="left:69.70px;top:166.09px;" width="9.40" height="8.60"><use href="#ref"/></svg>
<span class="t" style="left:81.50px;top:166.24px;font-size:6.85px;line-height:8.90px;color:#222;transform:scaleX(0.9299);transform-origin:0 50%;">DP-5</span>
<svg class="i" style="left:69.00px;top:176.92px;" width="11.00" height="10.80"><use href="#job"/></svg>
<span class="t" style="left:81.50px;top:178.77px;font-size:6.85px;line-height:8.90px;color:#222;transform:scaleX(0.9728);transform-origin:0 50%;">DP-Final</span>
<svg class="i" style="left:69.00px;top:189.45px;" width="11.00" height="10.80"><use href="#job"/></svg>
<span class="t" style="left:81.50px;top:191.30px;font-size:6.85px;line-height:8.90px;color:#222;transform:scaleX(0.9333);transform-origin:0 50%;">FTP Payables</span>
<svg class="i" style="left:69.00px;top:201.98px;" width="11.00" height="10.80"><use href="#job"/></svg>
<span class="t" style="left:81.50px;top:203.83px;font-size:6.85px;line-height:8.90px;color:#222;transform:scaleX(1.0142);transform-origin:0 50%;">Invoicing</span>
<svg class="i" style="left:49.80px;top:215.11px;" width="9.40" height="8.60"><use href="#folder"/></svg>
<span class="t" style="left:61.40px;top:216.36px;font-size:6.85px;line-height:8.90px;color:#222;transform:scaleX(1.0127);transform-origin:0 50%;">ActiveDirectory</span>
<svg class="i" style="left:43.2px;top:217.1px" width="4.2" height="4.2"><path d="M3.8 0.3 V3.8 H0.3 Z" fill="#333"/></svg>
<svg class="i" style="left:59.30px;top:226.24px;" width="10.60" height="10.80"><use href="#plan"/></svg>
<span class="t" style="left:71.45px;top:228.89px;font-size:6.85px;line-height:8.90px;color:#222;transform:scaleX(0.9543);transform-origin:0 50%;">AD-Prod</span>
<svg class="i" style="left:53.1px;top:229.6px" width="4.2" height="4.2"><path d="M3.8 0.3 V3.8 H0.3 Z" fill="#333"/></svg>
<svg class="i" style="left:69.00px;top:239.57px;" width="11.00" height="10.80"><use href="#job"/></svg>
<span class="t" style="left:81.50px;top:241.42px;font-size:6.85px;line-height:8.90px;color:#222;transform:scaleX(0.9619);transform-origin:0 50%;">AD-2</span>
<svg class="i" style="left:59.80px;top:253.80px;" width="9.40" height="8.60"><use href="#ref"/></svg>
<span class="t" style="left:71.45px;top:253.95px;font-size:6.85px;line-height:8.90px;color:#222;transform:scaleX(0.9459);transform-origin:0 50%;">AD-1</span>
<svg class="i" style="left:49.80px;top:265.23px;" width="9.40" height="8.60"><use href="#folder"/></svg>
<span class="t" style="left:61.40px;top:266.48px;font-size:6.85px;line-height:8.90px;color:#222;transform:scaleX(0.9937);transform-origin:0 50%;">Engineering</span>
<svg class="i" style="left:43.2px;top:267.2px" width="4.2" height="4.2"><path d="M3.8 0.3 V3.8 H0.3 Z" fill="#333"/></svg>
<svg class="i" style="left:59.70px;top:277.76px;" width="9.40" height="8.60"><use href="#folder"/></svg>
<span class="t" style="left:71.45px;top:279.01px;font-size:6.85px;line-height:8.90px;color:#222;transform:scaleX(0.9879);transform-origin:0 50%;">TestEnv</span>
<svg class="i" style="left:52.7px;top:279.4px" width="4.4" height="6"><path d="M0.5 0.6 L3.8 3 L0.5 5.4 Z" fill="#fff" stroke="#9a9a9a" stroke-width="0.6"/></svg>
<svg class="i" style="left:59.30px;top:288.89px;" width="10.60" height="10.80"><use href="#plan"/></svg>
<span class="t" style="left:71.45px;top:291.54px;font-size:6.85px;line-height:8.90px;color:#222;transform:scaleX(0.9734);transform-origin:0 50%;">DevTeam1</span>
<svg class="i" style="left:52.7px;top:291.9px" width="4.4" height="6"><path d="M0.5 0.6 L3.8 3 L0.5 5.4 Z" fill="#fff" stroke="#9a9a9a" stroke-width="0.6"/></svg>
<svg class="i" style="left:59.30px;top:301.42px;" width="10.60" height="10.80"><use href="#plan"/></svg>
<span class="t" style="left:71.45px;top:304.07px;font-size:6.85px;line-height:8.90px;color:#222;transform:scaleX(0.9734);transform-origin:0 50%;">DevTeam2</span>
<svg class="i" style="left:52.7px;top:304.4px" width="4.4" height="6"><path d="M0.5 0.6 L3.8 3 L0.5 5.4 Z" fill="#fff" stroke="#9a9a9a" stroke-width="0.6"/></svg>
<svg class="i" style="left:59.10px;top:314.75px;" width="11.00" height="10.80"><use href="#job"/></svg>
<span class="t" style="left:71.45px;top:316.60px;font-size:6.85px;line-height:8.90px;color:#222;transform:scaleX(0.9083);transform-origin:0 50%;">TFSMove</span>
<svg class="i" style="left:49.80px;top:327.88px;" width="9.40" height="8.60"><use href="#folder"/></svg>
<span class="t" style="left:61.40px;top:329.13px;font-size:6.85px;line-height:8.90px;color:#222;transform:scaleX(0.9864);transform-origin:0 50%;">HR Department</span>
<svg class="i" style="left:43.2px;top:329.9px" width="4.2" height="4.2"><path d="M3.8 0.3 V3.8 H0.3 Z" fill="#333"/></svg>
<svg class="i" style="left:59.30px;top:339.01px;" width="10.60" height="10.80"><use href="#plan"/></svg>
<span class="t" style="left:71.45px;top:341.66px;font-size:6.85px;line-height:8.90px;color:#222;transform:scaleX(0.9738);transform-origin:0 50%;">Assessment Performance Manage</span>
<svg class="i" style="left:52.7px;top:342.0px" width="4.4" height="6"><path d="M0.5 0.6 L3.8 3 L0.5 5.4 Z" fill="#fff" stroke="#9a9a9a" stroke-width="0.6"/></svg>
<svg class="i" style="left:59.30px;top:351.54px;" width="10.60" height="10.80"><use href="#plan"/></svg>
<span class="t" style="left:71.45px;top:354.19px;font-size:6.85px;line-height:8.90px;color:#222;transform:scaleX(1.0131);transform-origin:0 50%;">Infrastructure Management</span>
<svg class="i" style="left:52.7px;top:354.5px" width="4.4" height="6"><path d="M0.5 0.6 L3.8 3 L0.5 5.4 Z" fill="#fff" stroke="#9a9a9a" stroke-width="0.6"/></svg>
</div>
<div style="left:0.00px;top:486.60px;width:192.20px;height:16.85px;background:#ececec;border-top:1px solid #dcdcdc;border-right:1px solid #d8d8d8;"></div>
<svg class="i" style="left:3.00px;top:490.20px;" width="9.40" height="9.40"><use href="#ti-tags"/></svg>
<span class="t" style="left:15.60px;top:491.62px;font-size:6.9px;line-height:8.97px;color:#222;">Tags</span>
<div class="btn" style="left:169.20px;top:490.80px;width:8.60px;height:8.60px;"></div>
<svg class="i" style="left:169.50px;top:491.10px;" width="8.00" height="8.00"><use href="#plus"/></svg>
<div class="btn" style="left:179.80px;top:490.80px;width:8.80px;height:8.60px;"></div>
<svg class="i" style="left:180.20px;top:491.10px;" width="8.00" height="8.00"><use href="#xx"/></svg>
<div style="left:0.00px;top:503.45px;width:192.20px;height:16.85px;background:#ececec;border-top:1px solid #dcdcdc;border-right:1px solid #d8d8d8;"></div>
<svg class="i" style="left:3.00px;top:507.05px;" width="9.40" height="9.40"><use href="#ti-star"/></svg>
<span class="t" style="left:15.60px;top:508.47px;font-size:6.9px;line-height:8.97px;color:#222;">Favorites</span>
<div class="btn" style="left:169.20px;top:507.65px;width:8.60px;height:8.60px;"></div>
<svg class="i" style="left:169.50px;top:507.95px;" width="8.00" height="8.00"><use href="#plus"/></svg>
<div class="btn" style="left:179.80px;top:507.65px;width:8.80px;height:8.60px;"></div>
<svg class="i" style="left:180.20px;top:507.95px;" width="8.00" height="8.00"><use href="#xx"/></svg>
<div style="left:0.00px;top:520.30px;width:192.20px;height:16.85px;background:#ececec;border-top:1px solid #dcdcdc;border-right:1px solid #d8d8d8;"></div>
<svg class="i" style="left:3.00px;top:523.90px;" width="9.40" height="9.40"><use href="#ti-admin"/></svg>
<span class="t" style="left:15.60px;top:525.32px;font-size:6.9px;line-height:8.97px;color:#222;">Administrators</span>
<div class="btn" style="left:169.20px;top:524.50px;width:8.60px;height:8.60px;"></div>
<svg class="i" style="left:169.50px;top:524.80px;" width="8.00" height="8.00"><use href="#plus"/></svg>
<div class="btn" style="left:179.80px;top:524.50px;width:8.80px;height:8.60px;"></div>
<svg class="i" style="left:180.20px;top:524.80px;" width="8.00" height="8.00"><use href="#xx"/></svg>
<div style="left:0.00px;top:537.20px;width:196.00px;height:4.80px;background:#e2e2e2;"></div>
<div style="left:196.00px;top:125.50px;width:56.40px;height:412.20px;background:#a0610d;"></div>
<div style="left:197.80px;top:157.80px;width:54.60px;height:28.80px;background:#fbc57d;"></div>
<svg class="i" style="left:200.60px;top:135.20px;" width="11.00" height="11.00"><use href="#n-search"/></svg>
<span class="t" style="left:221.70px;top:137.07px;font-size:6.2px;line-height:8.06px;color:#fff;transform:scaleX(0.9175);transform-origin:0 50%;">General</span>
<svg class="i" style="left:200.60px;top:167.00px;" width="11.00" height="11.00"><use href="#n-lib"/></svg>
<span class="t" style="left:217.00px;top:168.87px;font-size:6.2px;line-height:8.06px;color:#8a6a3a;transform:scaleX(0.8783);transform-origin:0 50%;">Jobs Library</span>
<svg class="i" style="left:200.60px;top:198.80px;" width="11.00" height="11.00"><use href="#n-link"/></svg>
<span class="t" style="left:216.05px;top:200.67px;font-size:6.2px;line-height:8.06px;color:#fff;transform:scaleX(0.9065);transform-origin:0 50%;">Associations</span>
<svg class="i" style="left:200.60px;top:230.60px;" width="11.00" height="11.00"><use href="#n-queue"/></svg>
<span class="t" style="left:212.80px;top:232.47px;font-size:6.2px;line-height:8.06px;color:#fff;transform:scaleX(0.9054);transform-origin:0 50%;">Generic Queue</span>
<svg class="i" style="left:200.60px;top:262.40px;" width="11.00" height="11.00"><use href="#n-cube"/></svg>
<span class="t" style="left:220.10px;top:264.27px;font-size:6.2px;line-height:8.06px;color:#fff;transform:scaleX(0.9233);transform-origin:0 50%;">Variables</span>
<svg class="i" style="left:200.60px;top:294.20px;" width="11.00" height="11.00"><use href="#n-bolt"/></svg>
<span class="t" style="left:221.70px;top:296.07px;font-size:6.2px;line-height:8.06px;color:#fff;transform:scaleX(0.8990);transform-origin:0 50%;">Triggers</span>
<svg class="i" style="left:200.60px;top:326.00px;" width="11.00" height="11.00"><use href="#n-clock"/></svg>
<span class="t" style="left:217.10px;top:327.87px;font-size:6.2px;line-height:8.06px;color:#fff;transform:scaleX(0.9394);transform-origin:0 50%;">Constraints</span>
<svg class="i" style="left:200.60px;top:357.80px;" width="11.00" height="11.00"><use href="#n-gear"/></svg>
<span class="t" style="left:219.60px;top:359.67px;font-size:6.2px;line-height:8.06px;color:#fff;transform:scaleX(0.8975);transform-origin:0 50%;">Execution</span>
<svg class="i" style="left:200.60px;top:389.60px;" width="11.00" height="11.00"><use href="#n-warn"/></svg>
<span class="t" style="left:217.60px;top:391.47px;font-size:6.2px;line-height:8.06px;color:#fff;transform:scaleX(0.9830);transform-origin:0 50%;">Monitoring</span>
<svg class="i" style="left:200.60px;top:421.40px;" width="11.00" height="11.00"><use href="#n-bell"/></svg>
<span class="t" style="left:224.20px;top:423.27px;font-size:6.2px;line-height:8.06px;color:#fff;transform:scaleX(0.9603);transform-origin:0 50%;">Alerts</span>
<svg class="i" style="left:200.60px;top:453.20px;" width="11.00" height="11.00"><use href="#n-share"/></svg>
<span class="t" style="left:216.70px;top:455.07px;font-size:6.2px;line-height:8.06px;color:#fff;transform:scaleX(0.9645);transform-origin:0 50%;">Completion</span>
<svg class="i" style="left:200.60px;top:485.00px;" width="11.00" height="11.00"><use href="#n-pie"/></svg>
<span class="t" style="left:220.70px;top:486.87px;font-size:6.2px;line-height:8.06px;color:#fff;transform:scaleX(0.8964);transform-origin:0 50%;">Analytics</span>
<svg class="i" style="left:200.60px;top:516.80px;" width="11.00" height="11.00"><use href="#n-lock"/></svg>
<span class="t" style="left:221.75px;top:518.67px;font-size:6.2px;line-height:8.06px;color:#fff;transform:scaleX(0.8990);transform-origin:0 50%;">Security</span>
<div style="left:252.40px;top:125.50px;width:906.00px;height:412.60px;background:#f8c78d;"></div>
<div style="left:255.10px;top:129.00px;width:901.50px;height:12.50px;background:#a0610d;"></div>
<span class="t" style="left:258.80px;top:131.31px;font-size:8.6px;line-height:11.18px;color:#fff;transform:scaleX(0.9228);transform-origin:0 50%;">Jobs Library</span>
<div style="left:255.60px;top:141.60px;width:901.00px;height:375.60px;background:#f7f7f7;"></div>
<span class="t" style="left:267.80px;top:156.19px;font-size:7.4px;line-height:9.62px;color:#222;">Queue:</span>
<div class="inp" style="left:333.00px;top:153.80px;width:758.60px;height:13.50px;"></div>
<span class="t" style="left:336.40px;top:156.63px;font-size:7.5px;line-height:9.75px;color:#222;">/Sandbox/VP/Objects/AbatWebconsole-V</span>
<div style="left:1081.00px;top:153.80px;width:10.60px;height:13.50px;background:#f3f3f3;border:1px solid #c9c9c9;"></div>
<svg class="i" style="left:1081.20px;top:154.00px;" width="10.00" height="13.00"><use href="#combo"/></svg>
<div class="btn" style="left:1093.20px;top:153.80px;width:18.60px;height:13.50px;"></div>
<span class="t" style="left:1099.60px;top:157.55px;font-size:7px;line-height:9.10px;color:#333;">...</span>
<div class="btn" style="left:1113.20px;top:153.80px;width:31.60px;height:13.50px;"></div>
<span class="t" style="left:1119.40px;top:156.45px;font-size:7px;line-height:9.10px;color:#333;">New...</span>
<span class="t" style="left:267.80px;top:174.94px;font-size:7.4px;line-height:9.62px;color:#222;">User Account:</span>
<div class="inp" style="left:333.00px;top:172.55px;width:758.60px;height:13.50px;"></div>
<span class="t" style="left:336.40px;top:175.38px;font-size:7.5px;line-height:9.75px;color:#222;">/Sandbox/VP/Objects/User-V</span>
<div style="left:1081.00px;top:172.55px;width:10.60px;height:13.50px;background:#f3f3f3;border:1px solid #c9c9c9;"></div>
<svg class="i" style="left:1081.20px;top:172.75px;" width="10.00" height="13.00"><use href="#combo"/></svg>
<div class="btn" style="left:1093.20px;top:172.55px;width:18.60px;height:13.50px;"></div>
<span class="t" style="left:1099.60px;top:176.30px;font-size:7px;line-height:9.10px;color:#333;">...</span>
<div class="btn" style="left:1113.20px;top:172.55px;width:31.60px;height:13.50px;"></div>
<span class="t" style="left:1119.40px;top:175.20px;font-size:7px;line-height:9.10px;color:#333;">New...</span>
<span class="t" style="left:267.80px;top:193.69px;font-size:7.4px;line-height:9.62px;color:#222;">Job Type:</span>
<div class="inp" style="left:333.00px;top:191.30px;width:811.80px;height:13.50px;"></div>
<span class="t" style="left:336.40px;top:194.13px;font-size:7.5px;line-height:9.75px;color:#222;">Jobs Library</span>
<div style="left:1134.20px;top:191.30px;width:10.60px;height:13.50px;background:#f3f3f3;border:1px solid #c9c9c9;"></div>
<svg class="i" style="left:1134.40px;top:191.50px;" width="10.00" height="13.00"><use href="#combo"/></svg>
<div style="left:255.60px;top:210.20px;width:901.00px;height:4.60px;background:#efefef;border-top:1px solid #dedede;border-bottom:1px solid #dedede;"></div>
<div style="left:259.00px;top:221.00px;width:760.60px;height:15.00px;background:#c1c1c1;border-radius:2.5px 0 0 2.5px;"></div>
<svg class="i" style="left:264.40px;top:226.00px;" width="7.40" height="7.40"><use href="#chk"/></svg>
<svg class="i" style="left:274.00px;top:224.80px;" width="10.20" height="10.20"><use href="#s-on"/></svg>
<span class="t" style="left:286.00px;top:226.08px;font-size:6.8px;line-height:8.84px;color:#222;">Logon</span>
<span class="t" style="right:160.20px;top:226.01px;font-size:6.9px;line-height:8.97px;color:#222;">Dynamics AX</span>
<div style="left:1003.20px;top:225.00px;width:8.20px;height:8.20px;background:#f7f7f7;border-radius:1.5px;"></div>
<svg class="i" style="left:1003.30px;top:225.10px;" width="8.00" height="8.00"><use href="#chev2"/></svg>
<div style="left:1014.00px;top:225.00px;width:8.20px;height:8.20px;background:#f7f7f7;border-radius:1.5px;"></div>
<svg class="i" style="left:1014.20px;top:225.10px;" width="8.00" height="8.00"><use href="#xx"/></svg>
<div style="left:259.00px;top:241.05px;width:760.60px;height:15.00px;background:#c1c1c1;border-radius:2.5px 0 0 2.5px;"></div>
<svg class="i" style="left:264.40px;top:246.05px;" width="7.40" height="7.40"><use href="#chk"/></svg>
<svg class="i" style="left:274.00px;top:245.85px;" width="10.60" height="8.60"><use href="#s-task"/></svg>
<span class="t" style="left:286.00px;top:246.13px;font-size:6.8px;line-height:8.84px;color:#222;">RunTask</span>
<span class="t" style="right:160.20px;top:246.06px;font-size:6.9px;line-height:8.97px;color:#222;">Dynamics AX</span>
<div style="left:1003.20px;top:245.05px;width:8.20px;height:8.20px;background:#f7f7f7;border-radius:1.5px;"></div>
<svg class="i" style="left:1003.30px;top:245.15px;" width="8.00" height="8.00"><use href="#chev2"/></svg>
<div style="left:1014.00px;top:245.05px;width:8.20px;height:8.20px;background:#f7f7f7;border-radius:1.5px;"></div>
<svg class="i" style="left:1014.20px;top:245.15px;" width="8.00" height="8.00"><use href="#xx"/></svg>
<div style="left:259.00px;top:261.10px;width:760.60px;height:15.00px;background:#c1c1c1;border-radius:2.5px 0 0 2.5px;"></div>
<svg class="i" style="left:264.40px;top:266.10px;" width="7.40" height="7.40"><use href="#chk"/></svg>
<svg class="i" style="left:274.00px;top:265.30px;" width="10.40" height="9.40"><use href="#s-batch"/></svg>
<span class="t" style="left:286.00px;top:266.18px;font-size:6.8px;line-height:8.84px;color:#222;">RunBatchJobs</span>
<span class="t" style="right:160.20px;top:266.12px;font-size:6.9px;line-height:8.97px;color:#222;">Dynamics AX</span>
<div style="left:1003.20px;top:265.10px;width:8.20px;height:8.20px;background:#f7f7f7;border-radius:1.5px;"></div>
<svg class="i" style="left:1003.30px;top:265.20px;" width="8.00" height="8.00"><use href="#chev2"/></svg>
<div style="left:1014.00px;top:265.10px;width:8.20px;height:8.20px;background:#f7f7f7;border-radius:1.5px;"></div>
<svg class="i" style="left:1014.20px;top:265.20px;" width="8.00" height="8.00"><use href="#xx"/></svg>
<div style="left:259.00px;top:281.15px;width:760.60px;height:15.00px;background:#c1c1c1;border-radius:2.5px 0 0 2.5px;"></div>
<svg class="i" style="left:264.40px;top:286.15px;" width="7.40" height="7.40"><use href="#chk"/></svg>
<svg class="i" style="left:275.40px;top:285.75px;" width="8.20" height="9.00"><use href="#s-log"/></svg>
<span class="t" style="left:286.00px;top:286.23px;font-size:6.8px;line-height:8.84px;color:#222;">Log</span>
<span class="t" style="right:160.20px;top:286.16px;font-size:6.9px;line-height:8.97px;color:#222;">General</span>
<div style="left:1003.20px;top:285.15px;width:8.20px;height:8.20px;background:#f7f7f7;border-radius:1.5px;"></div>
<svg class="i" style="left:1003.30px;top:285.25px;" width="8.00" height="8.00"><use href="#chev2"/></svg>
<div style="left:1014.00px;top:285.15px;width:8.20px;height:8.20px;background:#f7f7f7;border-radius:1.5px;"></div>
<svg class="i" style="left:1014.20px;top:285.25px;" width="8.00" height="8.00"><use href="#xx"/></svg>
<div style="left:259.00px;top:301.20px;width:760.60px;height:15.00px;background:#c1c1c1;border-radius:2.5px 0 0 2.5px;"></div>
<svg class="i" style="left:264.40px;top:306.20px;" width="7.40" height="7.40"><use href="#chk"/></svg>
<svg class="i" style="left:274.00px;top:305.00px;" width="10.20" height="10.20"><use href="#s-off"/></svg>
<span class="t" style="left:286.00px;top:306.28px;font-size:6.8px;line-height:8.84px;color:#222;">Logoff</span>
<span class="t" style="right:160.20px;top:306.21px;font-size:6.9px;line-height:8.97px;color:#222;">Dynamics AX</span>
<div style="left:1003.20px;top:305.20px;width:8.20px;height:8.20px;background:#f7f7f7;border-radius:1.5px;"></div>
<svg class="i" style="left:1003.30px;top:305.30px;" width="8.00" height="8.00"><use href="#chev2"/></svg>
<div style="left:1014.00px;top:305.20px;width:8.20px;height:8.20px;background:#f7f7f7;border-radius:1.5px;"></div>
<svg class="i" style="left:1014.20px;top:305.30px;" width="8.00" height="8.00"><use href="#xx"/></svg>
<div style="left:1019.60px;top:215.00px;width:10.20px;height:302.20px;background:#f3f3f3;"></div>
<svg class="i" style="left:1022px;top:219.4px" width="6" height="4"><path d="M0.4 3.4 L3 0.6 L5.6 3.4 Z" fill="#9a9a9a"/></svg>
<svg class="i" style="left:1022px;top:510.4px" width="6" height="4"><path d="M0.4 0.6 L3 3.4 L5.6 0.6 Z" fill="#9a9a9a"/></svg>
<div style="left:1029.80px;top:215.00px;width:2.80px;height:302.20px;background:#ebebeb;"></div>
<div style="left:1032.20px;top:214.60px;width:124.40px;height:302.60px;background:#e9e9e9;border:1px solid #c9c9c9;border-bottom:none;"></div>
<div class="inp" style="left:1034.00px;top:216.00px;width:110.60px;height:12.80px;border-color:#b4b4bc;"></div>
<svg class="i" style="left:1035.60px;top:219.20px;" width="6.60" height="6.60"><use href="#mag"/></svg>
<span class="t" style="left:1044.00px;top:218.17px;font-size:8.2px;line-height:10.66px;color:#a8a8a8;">Search</span>
<div style="left:1144.40px;top:216.00px;width:10.60px;height:12.80px;background:linear-gradient(#f4f4f4,#dcdcdc);border:1px solid #b4b4bc;border-left:none;"></div>
<svg class="i" style="left:1145.60px;top:218.40px;" width="8.00" height="8.00"><use href="#xx"/></svg>
<div style="left:1032.80px;top:229.40px;width:112.40px;height:287.80px;background:#fff;border-left:1px solid #dcdcdc;"></div>
<div style="left:1145.20px;top:229.40px;width:11.20px;height:287.80px;background:#f1f1f1;"></div>
<div style="left:1147.60px;top:242.00px;width:7.20px;height:128.00px;background:#c1c1c1;"></div>
<svg class="i" style="left:1148px;top:235.4px" width="6" height="4"><path d="M0.4 3.4 L3 0.6 L5.6 3.4 Z" fill="#444"/></svg>
<svg class="i" style="left:1148px;top:510.4px" width="6" height="4"><path d="M0.4 0.6 L3 3.4 L5.6 0.6 Z" fill="#444"/></svg>
<div style="left:1033.6px;top:229.4px;width:111.6px;height:287.8px;overflow:hidden;">
<div style="left:0.00px;top:14.20px;width:111.60px;height:0.80px;background:#f0f0f0;"></div>
<svg class="i" style="left:2.6px;top:5.0px" width="4.4" height="6"><path d="M0.5 0.6 L3.8 3 L0.5 5.4 Z" fill="#fff" stroke="#9a9a9a" stroke-width="0.6"/></svg>
<svg class="i" style="left:9.40px;top:3.00px;" width="10.00" height="10.00"><use href="#lib"/></svg>
<span class="t" style="left:20.80px;top:4.65px;font-size:6.85px;line-height:8.90px;color:#222;">Active Directory</span>
<div style="left:0.00px;top:27.31px;width:111.60px;height:0.80px;background:#f0f0f0;"></div>
<svg class="i" style="left:2.6px;top:18.1px" width="4.4" height="6"><path d="M0.5 0.6 L3.8 3 L0.5 5.4 Z" fill="#fff" stroke="#9a9a9a" stroke-width="0.6"/></svg>
<svg class="i" style="left:9.40px;top:16.11px;" width="10.00" height="10.00"><use href="#lib"/></svg>
<span class="t" style="left:20.80px;top:17.76px;font-size:6.85px;line-height:8.90px;color:#222;">ActiveBatch</span>
<div style="left:0.00px;top:40.42px;width:111.60px;height:0.80px;background:#f0f0f0;"></div>
<svg class="i" style="left:2.6px;top:31.2px" width="4.4" height="6"><path d="M0.5 0.6 L3.8 3 L0.5 5.4 Z" fill="#fff" stroke="#9a9a9a" stroke-width="0.6"/></svg>
<svg class="i" style="left:9.40px;top:29.22px;" width="10.00" height="10.00"><use href="#lib"/></svg>
<span class="t" style="left:20.80px;top:30.87px;font-size:6.85px;line-height:8.90px;color:#222;">ActiveBatch Installation</span>
<div style="left:0.00px;top:53.53px;width:111.60px;height:0.80px;background:#f0f0f0;"></div>
<svg class="i" style="left:2.6px;top:44.3px" width="4.4" height="6"><path d="M0.5 0.6 L3.8 3 L0.5 5.4 Z" fill="#fff" stroke="#9a9a9a" stroke-width="0.6"/></svg>
<svg class="i" style="left:9.40px;top:42.33px;" width="10.00" height="10.00"><use href="#lib"/></svg>
<span class="t" style="left:20.80px;top:43.98px;font-size:6.85px;line-height:8.90px;color:#222;">BackupExec</span>
<div style="left:0.00px;top:66.64px;width:111.60px;height:0.80px;background:#f0f0f0;"></div>
<svg class="i" style="left:2.6px;top:57.4px" width="4.4" height="6"><path d="M0.5 0.6 L3.8 3 L0.5 5.4 Z" fill="#fff" stroke="#9a9a9a" stroke-width="0.6"/></svg>
<svg class="i" style="left:9.40px;top:55.44px;" width="10.00" height="10.00"><use href="#lib"/></svg>
<span class="t" style="left:20.80px;top:57.09px;font-size:6.85px;line-height:8.90px;color:#222;">Certificates</span>
<div style="left:0.00px;top:79.75px;width:111.60px;height:0.80px;background:#f0f0f0;"></div>
<svg class="i" style="left:2.6px;top:70.5px" width="4.4" height="6"><path d="M0.5 0.6 L3.8 3 L0.5 5.4 Z" fill="#fff" stroke="#9a9a9a" stroke-width="0.6"/></svg>
<svg class="i" style="left:9.40px;top:68.55px;" width="10.00" height="10.00"><use href="#lib"/></svg>
<span class="t" style="left:20.80px;top:70.20px;font-size:6.85px;line-height:8.90px;color:#222;">Database</span>
<div style="left:0.00px;top:92.86px;width:111.60px;height:0.80px;background:#f0f0f0;"></div>
<svg class="i" style="left:2.6px;top:83.7px" width="4.4" height="6"><path d="M0.5 0.6 L3.8 3 L0.5 5.4 Z" fill="#fff" stroke="#9a9a9a" stroke-width="0.6"/></svg>
<svg class="i" style="left:9.40px;top:81.66px;" width="10.00" height="10.00"><use href="#lib"/></svg>
<span class="t" style="left:20.80px;top:83.31px;font-size:6.85px;line-height:8.90px;color:#222;">Database (Oracle)</span>
<div style="left:0.00px;top:105.97px;width:111.60px;height:0.80px;background:#f0f0f0;"></div>
<svg class="i" style="left:2.6px;top:96.8px" width="4.4" height="6"><path d="M0.5 0.6 L3.8 3 L0.5 5.4 Z" fill="#fff" stroke="#9a9a9a" stroke-width="0.6"/></svg>
<svg class="i" style="left:9.40px;top:94.77px;" width="10.00" height="10.00"><use href="#lib"/></svg>
<span class="t" style="left:20.80px;top:96.42px;font-size:6.85px;line-height:8.90px;color:#222;">Database (Sql Server)</span>
<div style="left:0.00px;top:119.08px;width:111.60px;height:0.80px;background:#f0f0f0;"></div>
<svg class="i" style="left:2.6px;top:109.9px" width="4.4" height="6"><path d="M0.5 0.6 L3.8 3 L0.5 5.4 Z" fill="#fff" stroke="#9a9a9a" stroke-width="0.6"/></svg>
<svg class="i" style="left:9.40px;top:107.88px;" width="10.00" height="10.00"><use href="#lib"/></svg>
<span class="t" style="left:20.80px;top:109.53px;font-size:6.85px;line-height:8.90px;color:#222;">File System</span>
<div style="left:0.00px;top:132.19px;width:111.60px;height:0.80px;background:#f0f0f0;"></div>
<svg class="i" style="left:2.6px;top:123.0px" width="4.4" height="6"><path d="M0.5 0.6 L3.8 3 L0.5 5.4 Z" fill="#fff" stroke="#9a9a9a" stroke-width="0.6"/></svg>
<svg class="i" style="left:9.40px;top:120.99px;" width="10.00" height="10.00"><use href="#lib"/></svg>
<span class="t" style="left:20.80px;top:122.64px;font-size:6.85px;line-height:8.90px;color:#222;">Flow Control</span>
<div style="left:0.00px;top:145.30px;width:111.60px;height:0.80px;background:#f0f0f0;"></div>
<svg class="i" style="left:2.6px;top:136.1px" width="4.4" height="6"><path d="M0.5 0.6 L3.8 3 L0.5 5.4 Z" fill="#fff" stroke="#9a9a9a" stroke-width="0.6"/></svg>
<svg class="i" style="left:9.40px;top:134.10px;" width="10.00" height="10.00"><use href="#lib"/></svg>
<span class="t" style="left:20.80px;top:135.75px;font-size:6.85px;line-height:8.90px;color:#222;">General</span>
<div style="left:0.00px;top:158.41px;width:111.60px;height:0.80px;background:#f0f0f0;"></div>
<svg class="i" style="left:2.6px;top:149.2px" width="4.4" height="6"><path d="M0.5 0.6 L3.8 3 L0.5 5.4 Z" fill="#fff" stroke="#9a9a9a" stroke-width="0.6"/></svg>
<svg class="i" style="left:9.40px;top:147.21px;" width="10.00" height="10.00"><use href="#lib"/></svg>
<span class="t" style="left:20.80px;top:148.86px;font-size:6.85px;line-height:8.90px;color:#222;">Generic Installation</span>
<div style="left:0.00px;top:171.52px;width:111.60px;height:0.80px;background:#f0f0f0;"></div>
<svg class="i" style="left:2.6px;top:162.3px" width="4.4" height="6"><path d="M0.5 0.6 L3.8 3 L0.5 5.4 Z" fill="#fff" stroke="#9a9a9a" stroke-width="0.6"/></svg>
<svg class="i" style="left:9.40px;top:160.32px;" width="10.00" height="10.00"><use href="#lib"/></svg>
<span class="t" style="left:20.80px;top:161.97px;font-size:6.85px;line-height:8.90px;color:#222;">Java</span>
<div style="left:0.00px;top:184.63px;width:111.60px;height:0.80px;background:#f0f0f0;"></div>
<svg class="i" style="left:2.6px;top:175.4px" width="4.4" height="6"><path d="M0.5 0.6 L3.8 3 L0.5 5.4 Z" fill="#fff" stroke="#9a9a9a" stroke-width="0.6"/></svg>
<svg class="i" style="left:9.40px;top:173.43px;" width="10.00" height="10.00"><use href="#lib"/></svg>
<span class="t" style="left:20.80px;top:175.08px;font-size:6.85px;line-height:8.90px;color:#222;">Mainframe Job</span>
<div style="left:0.00px;top:197.74px;width:111.60px;height:0.80px;background:#f0f0f0;"></div>
<svg class="i" style="left:2.6px;top:188.5px" width="4.4" height="6"><path d="M0.5 0.6 L3.8 3 L0.5 5.4 Z" fill="#fff" stroke="#9a9a9a" stroke-width="0.6"/></svg>
<svg class="i" style="left:9.40px;top:186.54px;" width="10.00" height="10.00"><use href="#lib"/></svg>
<span class="t" style="left:20.80px;top:188.19px;font-size:6.85px;line-height:8.90px;color:#222;">Messaging</span>
<div style="left:0.00px;top:210.85px;width:111.60px;height:0.80px;background:#f0f0f0;"></div>
<svg class="i" style="left:2.6px;top:201.6px" width="4.4" height="6"><path d="M0.5 0.6 L3.8 3 L0.5 5.4 Z" fill="#fff" stroke="#9a9a9a" stroke-width="0.6"/></svg>
<svg class="i" style="left:9.40px;top:199.65px;" width="10.00" height="10.00"><use href="#lib"/></svg>
<span class="t" style="left:20.80px;top:201.30px;font-size:6.85px;line-height:8.90px;color:#222;">Microsoft Exchange</span>
<div style="left:0.00px;top:223.96px;width:111.60px;height:0.80px;background:#f0f0f0;"></div>
<svg class="i" style="left:2.6px;top:214.8px" width="4.4" height="6"><path d="M0.5 0.6 L3.8 3 L0.5 5.4 Z" fill="#fff" stroke="#9a9a9a" stroke-width="0.6"/></svg>
<svg class="i" style="left:9.40px;top:212.76px;" width="10.00" height="10.00"><use href="#lib"/></svg>
<span class="t" style="left:20.80px;top:214.41px;font-size:6.85px;line-height:8.90px;color:#222;">Networking</span>
<div style="left:0.00px;top:237.07px;width:111.60px;height:0.80px;background:#f0f0f0;"></div>
<svg class="i" style="left:2.6px;top:227.9px" width="4.4" height="6"><path d="M0.5 0.6 L3.8 3 L0.5 5.4 Z" fill="#fff" stroke="#9a9a9a" stroke-width="0.6"/></svg>
<svg class="i" style="left:9.40px;top:225.87px;" width="10.00" height="10.00"><use href="#lib"/></svg>
<span class="t" style="left:20.80px;top:227.52px;font-size:6.85px;line-height:8.90px;color:#222;">OpenPGP</span>
<div style="left:0.00px;top:250.18px;width:111.60px;height:0.80px;background:#f0f0f0;"></div>
<svg class="i" style="left:2.6px;top:241.0px" width="4.4" height="6"><path d="M0.5 0.6 L3.8 3 L0.5 5.4 Z" fill="#fff" stroke="#9a9a9a" stroke-width="0.6"/></svg>
<svg class="i" style="left:9.40px;top:238.98px;" width="10.00" height="10.00"><use href="#lib"/></svg>
<span class="t" style="left:20.80px;top:240.63px;font-size:6.85px;line-height:8.90px;color:#222;">Power Management</span>
<div style="left:0.00px;top:263.29px;width:111.60px;height:0.80px;background:#f0f0f0;"></div>
<svg class="i" style="left:2.6px;top:254.1px" width="4.4" height="6"><path d="M0.5 0.6 L3.8 3 L0.5 5.4 Z" fill="#fff" stroke="#9a9a9a" stroke-width="0.6"/></svg>
<svg class="i" style="left:9.40px;top:252.09px;" width="10.00" height="10.00"><use href="#lib"/></svg>
<span class="t" style="left:20.80px;top:253.74px;font-size:6.85px;line-height:8.90px;color:#222;">PowerShell</span>
<div style="left:0.00px;top:276.40px;width:111.60px;height:0.80px;background:#f0f0f0;"></div>
<svg class="i" style="left:2.6px;top:267.2px" width="4.4" height="6"><path d="M0.5 0.6 L3.8 3 L0.5 5.4 Z" fill="#fff" stroke="#9a9a9a" stroke-width="0.6"/></svg>
<svg class="i" style="left:9.40px;top:265.20px;" width="10.00" height="10.00"><use href="#lib"/></svg>
<span class="t" style="left:20.80px;top:266.85px;font-size:6.85px;line-height:8.90px;color:#222;">Reporting</span>
<div style="left:0.00px;top:289.51px;width:111.60px;height:0.80px;background:#f0f0f0;"></div>
<svg class="i" style="left:2.6px;top:280.3px" width="4.4" height="6"><path d="M0.5 0.6 L3.8 3 L0.5 5.4 Z" fill="#fff" stroke="#9a9a9a" stroke-width="0.6"/></svg>
<svg class="i" style="left:9.40px;top:278.31px;" width="10.00" height="10.00"><use href="#lib"/></svg>
<span class="t" style="left:20.80px;top:279.96px;font-size:6.85px;line-height:8.90px;color:#222;">System Administration</span>
</div>
<div style="left:255.60px;top:517.20px;width:901.00px;height:17.20px;background:linear-gradient(#e6e6e6,#eeeeee);"></div>
<span class="t" style="left:261.60px;top:522.62px;font-size:6.9px;line-height:8.97px;color:#222;">Undo</span>
<span class="t" style="left:287.00px;top:522.62px;font-size:6.9px;line-height:8.97px;color:#222;">Redo</span>
<svg class="i" style="left:661.00px;top:473.60px;" width="8.20" height="12.40"><use href="#cursor"/></svg>
<div style="left:196.00px;top:538.10px;width:963.00px;height:3.80px;background:#e0e0e0;"></div>
<svg class="i" style="left:577px;top:538.8px" width="4" height="3"><path d="M0 0 H4 L2 2.4 Z" fill="#333"/></svg>
<div style="left:0.00px;top:541.80px;width:750.00px;height:117.40px;background:#e9e9e9;border-top:1px solid #d6d6d6;border-right:1px solid #d0d0d0;"></div>
<div style="left:750.00px;top:541.80px;width:3.60px;height:133.20px;background:#d9d9d9;"></div>
<span class="t" style="left:5.40px;top:546.22px;font-size:7.2px;line-height:9.36px;color:#1a1a1a;font-weight:bold;transform:scaleX(1.0431);transform-origin:0 50%;">Instances</span>
<span class="t" style="left:1.00px;top:560.35px;font-size:6.85px;line-height:8.90px;color:#222;transform:scaleX(0.9811);transform-origin:0 50%;">//ABATWEBCONSOLE/Sandbox/VP/Accountingdepartment/Daily Procedure/Financial Reporting/FR-WF</span>
<div style="left:0.00px;top:569.40px;width:749.40px;height:17.40px;background:#f1f1f1;"></div>
<svg class="i" style="left:3.80px;top:573.00px;" width="8.80" height="8.80"><use href="#refresh"/></svg>
<div style="left:16.80px;top:573.00px;width:0.80px;height:9.40px;background:#c4c4c4;"></div>
<div style="left:34.40px;top:573.00px;width:0.80px;height:9.40px;background:#c4c4c4;"></div>
<div style="left:86.20px;top:573.00px;width:0.80px;height:9.40px;background:#c4c4c4;"></div>
<div style="left:104.60px;top:573.00px;width:0.80px;height:9.40px;background:#c4c4c4;"></div>
<div style="left:217.80px;top:573.00px;width:0.80px;height:9.40px;background:#c4c4c4;"></div>
<svg class="i" style="left:23.6px;top:575.0px" width="4" height="5.4"><path d="M3.6 0.4 V5 L0.4 2.7 Z" fill="#b4b4b4"/></svg>
<svg class="i" style="left:94px;top:575.0px" width="4" height="5.4"><path d="M0.4 0.4 V5 L3.6 2.7 Z" fill="#b4b4b4"/></svg>
<span class="t" style="left:38.80px;top:574.08px;font-size:6.8px;line-height:8.84px;color:#222;">Page</span>
<div class="inp" style="left:59.20px;top:571.40px;width:18.60px;height:12.20px;"></div>
<span class="t" style="left:62.00px;top:572.82px;font-size:7.2px;line-height:9.36px;color:#222;">1</span>
<span class="t" style="left:106.80px;top:574.08px;font-size:6.8px;line-height:8.84px;color:#222;">Limit:</span>
<div class="inp" style="left:128.20px;top:571.40px;width:21.40px;height:12.20px;"></div>
<span class="t" style="left:131.00px;top:572.82px;font-size:7.2px;line-height:9.36px;color:#222;">30</span>
<div class="inp" style="left:151.60px;top:571.40px;width:49.80px;height:12.20px;"></div>
<span class="t" style="left:154.40px;top:572.82px;font-size:7.2px;line-height:9.36px;color:#222;">All Instances</span>
<span class="t" style="left:206.80px;top:572.95px;font-size:7px;line-height:9.10px;color:#222;">...</span>
<svg class="i" style="left:224.40px;top:573.80px;" width="7.60" height="7.60"><use href="#chk"/></svg>
<div class="inp" style="left:235.40px;top:571.40px;width:67.40px;height:12.20px;"></div>
<span class="t" style="left:238.20px;top:572.82px;font-size:7.2px;line-height:9.36px;color:#222;">Custom</span>
<svg class="i" style="left:292.60px;top:571.00px;" width="10.00" height="13.00"><use href="#combo"/></svg>
<div class="inp" style="left:307.40px;top:571.40px;width:51.80px;height:12.20px;"></div>
<span class="t" style="left:310.00px;top:572.56px;font-size:7.6px;line-height:9.88px;color:#222;">12/1/2014</span>
<svg class="i" style="left:360.00px;top:571.80px;" width="9.00" height="10.40"><use href="#cal"/></svg>
<div class="inp" style="left:373.00px;top:571.40px;width:55.60px;height:12.20px;"></div>
<span class="t" style="left:375.60px;top:572.69px;font-size:7.4px;line-height:9.62px;color:#222;">12:00:00 AM</span>
<span class="t" style="left:432.00px;top:574.09px;font-size:7.4px;line-height:9.62px;color:#222;">to</span>
<div class="inp" style="left:442.00px;top:571.40px;width:51.00px;height:12.20px;"></div>
<span class="t" style="left:444.60px;top:572.56px;font-size:7.6px;line-height:9.88px;color:#222;">12/18/2014</span>
<svg class="i" style="left:494.20px;top:571.80px;" width="9.00" height="10.40"><use href="#cal"/></svg>
<div class="inp" style="left:507.40px;top:571.40px;width:56.00px;height:12.20px;"></div>
<span class="t" style="left:510.00px;top:572.69px;font-size:7.4px;line-height:9.62px;color:#222;">11:59:59 PM</span>
<div style="left:0.00px;top:586.80px;width:749.40px;height:72.40px;background:#fff;"></div>
<div style="left:0.00px;top:586.80px;width:749.40px;height:13.70px;background:linear-gradient(#fafafa,#ededed);border-top:1px solid #dadada;border-bottom:1px solid #d2d2d2;"></div>
<span class="t" style="left:3.70px;top:589.88px;font-size:6.8px;line-height:8.84px;color:#222;">Name</span>
<div style="left:139.90px;top:586.80px;width:0.80px;height:65.80px;background:#dcdcdc;"></div>
<span class="t" style="left:144.60px;top:589.88px;font-size:6.8px;line-height:8.84px;color:#222;">ID</span>
<div style="left:186.90px;top:586.80px;width:0.80px;height:65.80px;background:#dcdcdc;"></div>
<span class="t" style="left:191.60px;top:589.88px;font-size:6.8px;line-height:8.84px;color:#222;">State</span>
<div style="left:327.10px;top:586.80px;width:0.80px;height:65.80px;background:#dcdcdc;"></div>
<span class="t" style="left:331.60px;top:589.88px;font-size:6.8px;line-height:8.84px;color:#222;">Execution Time</span>
<div style="left:421.10px;top:586.80px;width:0.80px;height:65.80px;background:#dcdcdc;"></div>
<span class="t" style="left:425.60px;top:589.88px;font-size:6.8px;line-height:8.84px;color:#222;">Duration</span>
<div style="left:465.10px;top:586.80px;width:0.80px;height:65.80px;background:#dcdcdc;"></div>
<span class="t" style="left:469.20px;top:589.88px;font-size:6.8px;line-height:8.84px;color:#222;">Exit Code</span>
<div style="left:514.60px;top:586.80px;width:0.80px;height:65.80px;background:#dcdcdc;"></div>
<span class="t" style="left:519.60px;top:589.88px;font-size:6.8px;line-height:8.84px;color:#222;">Exit Code Description</span>
<div style="left:654.60px;top:586.80px;width:0.80px;height:65.80px;background:#dcdcdc;"></div>
<span class="t" style="left:659.00px;top:589.88px;font-size:6.8px;line-height:8.84px;color:#222;">Queue</span>
<div style="left:702.10px;top:586.80px;width:0.80px;height:65.80px;background:#dcdcdc;"></div>
<span class="t" style="left:707.60px;top:589.88px;font-size:6.8px;line-height:8.84px;color:#222;">Tags</span>
<svg class="i" style="left:380.6px;top:592.2px" width="4.4" height="3"><path d="M0 0 H4.4 L2.2 2.6 Z" fill="#8a8a8a"/></svg>
<div style="left:0.00px;top:600.50px;width:749.40px;height:13.20px;background:#ececec;border-top:1px dashed #b0b0b0;border-bottom:1px dashed #b0b0b0;"></div>
<svg class="i" style="left:11.40px;top:602.30px;" width="7.20" height="9.00"><use href="#file"/></svg>
<span class="t" style="left:21.60px;top:603.35px;font-size:6.85px;line-height:8.90px;color:#2f7d32;">FR-WF</span>
<span class="t" style="left:144.60px;top:603.35px;font-size:6.85px;line-height:8.90px;color:#2f7d32;">16303</span>
<span class="t" style="left:191.60px;top:603.35px;font-size:6.85px;line-height:8.90px;color:#2f7d32;">Succeeded</span>
<span class="t" style="left:331.60px;top:603.35px;font-size:6.85px;line-height:8.90px;color:#2f7d32;">12/17/14 11:26 AM</span>
<span class="t" style="left:425.60px;top:603.35px;font-size:6.85px;line-height:8.90px;color:#2f7d32;">0.52 min</span>
<span class="t" style="left:469.20px;top:603.35px;font-size:6.85px;line-height:8.90px;color:#2f7d32;">100 (0x00...</span>
<span class="t" style="left:659.00px;top:603.35px;font-size:6.85px;line-height:8.90px;color:#2f7d32;">AbatWebc...</span>
<div style="left:0.00px;top:626.50px;width:749.40px;height:0.80px;background:#e6e6e6;"></div>
<svg class="i" style="left:11.40px;top:615.50px;" width="7.20" height="9.00"><use href="#file"/></svg>
<span class="t" style="left:21.60px;top:616.55px;font-size:6.85px;line-height:8.90px;color:#2f7d32;">FR-WF</span>
<span class="t" style="left:144.60px;top:616.55px;font-size:6.85px;line-height:8.90px;color:#2f7d32;">16264</span>
<span class="t" style="left:191.60px;top:616.55px;font-size:6.85px;line-height:8.90px;color:#2f7d32;">Succeeded</span>
<span class="t" style="left:331.60px;top:616.55px;font-size:6.85px;line-height:8.90px;color:#2f7d32;">12/16/14 9:45 AM</span>
<span class="t" style="left:425.60px;top:616.55px;font-size:6.85px;line-height:8.90px;color:#2f7d32;">0.51 min</span>
<span class="t" style="left:469.20px;top:616.55px;font-size:6.85px;line-height:8.90px;color:#2f7d32;">100 (0x00...</span>
<span class="t" style="left:659.00px;top:616.55px;font-size:6.85px;line-height:8.90px;color:#2f7d32;">AbatWebc...</span>
<div style="left:0.00px;top:639.70px;width:749.40px;height:0.80px;background:#e6e6e6;"></div>
<svg class="i" style="left:11.40px;top:628.70px;" width="7.20" height="9.00"><use href="#file"/></svg>
<span class="t" style="left:21.60px;top:629.75px;font-size:6.85px;line-height:8.90px;color:#2f7d32;">FR-WF</span>
<span class="t" style="left:144.60px;top:629.75px;font-size:6.85px;line-height:8.90px;color:#2f7d32;">16245</span>
<span class="t" style="left:191.60px;top:629.75px;font-size:6.85px;line-height:8.90px;color:#2f7d32;">Succeeded</span>
<span class="t" style="left:331.60px;top:629.75px;font-size:6.85px;line-height:8.90px;color:#2f7d32;">12/15/14 11:04 AM</span>
<span class="t" style="left:425.60px;top:629.75px;font-size:6.85px;line-height:8.90px;color:#2f7d32;">0.52 min</span>
<span class="t" style="left:469.20px;top:629.75px;font-size:6.85px;line-height:8.90px;color:#2f7d32;">100 (0x00...</span>
<span class="t" style="left:659.00px;top:629.75px;font-size:6.85px;line-height:8.90px;color:#2f7d32;">AbatWebc...</span>
<div style="left:0.00px;top:652.90px;width:749.40px;height:0.80px;background:#e6e6e6;"></div>
<svg class="i" style="left:11.40px;top:641.90px;" width="7.20" height="9.00"><use href="#file"/></svg>
<span class="t" style="left:21.60px;top:642.95px;font-size:6.85px;line-height:8.90px;color:#2f7d32;">FR-WF</span>
<span class="t" style="left:144.60px;top:642.95px;font-size:6.85px;line-height:8.90px;color:#2f7d32;">16229</span>
<span class="t" style="left:191.60px;top:642.95px;font-size:6.85px;line-height:8.90px;color:#2f7d32;">Succeeded</span>
<span class="t" style="left:331.60px;top:642.95px;font-size:6.85px;line-height:8.90px;color:#2f7d32;">12/14/14 8:38 PM</span>
<span class="t" style="left:425.60px;top:642.95px;font-size:6.85px;line-height:8.90px;color:#2f7d32;">0.52 min</span>
<span class="t" style="left:469.20px;top:642.95px;font-size:6.85px;line-height:8.90px;color:#2f7d32;">100 (0x00...</span>
<span class="t" style="left:659.00px;top:642.95px;font-size:6.85px;line-height:8.90px;color:#2f7d32;">AbatWebc...</span>
<div style="left:139.90px;top:600.50px;width:0.80px;height:52.80px;background:#e2e2e2;mix-blend-mode:multiply;"></div>
<div style="left:186.90px;top:600.50px;width:0.80px;height:52.80px;background:#e2e2e2;mix-blend-mode:multiply;"></div>
<div style="left:327.10px;top:600.50px;width:0.80px;height:52.80px;background:#e2e2e2;mix-blend-mode:multiply;"></div>
<div style="left:421.10px;top:600.50px;width:0.80px;height:52.80px;background:#e2e2e2;mix-blend-mode:multiply;"></div>
<div style="left:465.10px;top:600.50px;width:0.80px;height:52.80px;background:#e2e2e2;mix-blend-mode:multiply;"></div>
<div style="left:514.60px;top:600.50px;width:0.80px;height:52.80px;background:#e2e2e2;mix-blend-mode:multiply;"></div>
<div style="left:654.60px;top:600.50px;width:0.80px;height:52.80px;background:#e2e2e2;mix-blend-mode:multiply;"></div>
<div style="left:702.10px;top:600.50px;width:0.80px;height:52.80px;background:#e2e2e2;mix-blend-mode:multiply;"></div>
<div style="left:0.00px;top:659.20px;width:1159.00px;height:15.80px;background:#ececec;"></div>
<div style="left:0.00px;top:660.40px;width:750.00px;height:12.80px;background:#d3d3d3;"></div>
<div style="left:1.00px;top:661.00px;width:68.00px;height:14.00px;background:#ececec;border:1px solid #c2c2c2;border-bottom:none;border-radius:2px 2px 0 0;"></div>
<svg class="i" style="left:7.60px;top:663.20px;" width="8.00" height="10.00"><use href="#file"/></svg>
<span class="t" style="left:20.00px;top:663.62px;font-size:7.2px;line-height:9.36px;color:#1a1a1a;font-weight:bold;transform:scaleX(1.0250);transform-origin:0 50%;">Instances</span>
<svg class="i" style="left:61.4px;top:664px" width="5.4" height="5.4"><rect x="0.3" y="0.3" width="4.8" height="4.8" rx="0.8" fill="#eee" stroke="#bbb" stroke-width="0.5"/><path d="M1.5 1.5 L3.9 3.9 M3.9 1.5 L1.5 3.9" stroke="#777" stroke-width="0.6"/></svg>
<div style="left:753.40px;top:541.80px;width:405.60px;height:117.40px;background:#e9e9e9;border-top:1px solid #d6d6d6;border-left:1px solid #d0d0d0;"></div>
<span class="t" style="left:759.00px;top:546.22px;font-size:7.2px;line-height:9.36px;color:#1a1a1a;font-weight:bold;transform:scaleX(1.0404);transform-origin:0 50%;">Properties</span>
<svg class="i" style="left:758.40px;top:561.00px;" width="8.60" height="8.60"><use href="#refresh"/></svg>
<div style="left:754.00px;top:574.40px;width:395.20px;height:84.80px;background:#fff;border-top:1px solid #d8d8d8;"></div>
<div style="left:1149.20px;top:574.40px;width:9.80px;height:84.80px;background:#f1f1f1;"></div>
<div style="left:1150.00px;top:585.80px;width:7.80px;height:22.00px;background:#c1c1c1;"></div>
<svg class="i" style="left:1151.4px;top:578.6px" width="6" height="4"><path d="M0.4 3.4 L3 0.6 L5.6 3.4 Z" fill="#9a9a9a"/></svg>
<svg class="i" style="left:1151.4px;top:651.4px" width="6" height="4"><path d="M0.4 0.6 L3 3.4 L5.6 0.6 Z" fill="#444"/></svg>
<span class="t" style="left:756.80px;top:581.82px;font-size:7.2px;line-height:9.36px;color:#4a4a4a;font-weight:bold;transform:scaleX(1.0156);transform-origin:0 50%;">General</span>
<div style="left:754.00px;top:593.00px;width:395.20px;height:0.90px;background:#c8c8c8;"></div>
<div style="left:754.00px;top:606.60px;width:395.20px;height:0.80px;background:#e6e6e6;"></div>
<span class="t" style="left:757.30px;top:596.35px;font-size:6.85px;line-height:8.90px;color:#222;">Object Type</span>
<span class="t" style="left:829.60px;top:596.35px;font-size:6.85px;line-height:8.90px;color:#222;">Job</span>
<div style="left:754.00px;top:607.10px;width:395.20px;height:13.00px;background:#f8f8f8;"></div>
<div style="left:754.00px;top:619.80px;width:395.20px;height:0.80px;background:#e6e6e6;"></div>
<span class="t" style="left:757.30px;top:609.55px;font-size:6.85px;line-height:8.90px;color:#222;">Name</span>
<span class="t" style="left:829.60px;top:609.55px;font-size:6.85px;line-height:8.90px;color:#222;">FR-WF</span>
<div style="left:754.00px;top:633.00px;width:395.20px;height:0.80px;background:#e6e6e6;"></div>
<span class="t" style="left:757.30px;top:622.75px;font-size:6.85px;line-height:8.90px;color:#222;">Label</span>
<span class="t" style="left:829.60px;top:622.75px;font-size:6.85px;line-height:8.90px;color:#222;">FR-WF</span>
<div style="left:754.00px;top:633.50px;width:395.20px;height:13.00px;background:#f8f8f8;"></div>
<div style="left:754.00px;top:646.20px;width:395.20px;height:0.80px;background:#e6e6e6;"></div>
<span class="t" style="left:757.30px;top:635.95px;font-size:6.85px;line-height:8.90px;color:#222;">Path</span>
<span class="t" style="left:829.60px;top:635.95px;font-size:6.85px;line-height:8.90px;color:#222;transform:scaleX(1.0050);transform-origin:0 50%;">/Sandbox/VP/Accountingdepartment/Daily Procedure/Financial Reporting</span>
<div style="left:754.00px;top:659.40px;width:395.20px;height:0.80px;background:#e6e6e6;"></div>
<span class="t" style="left:757.30px;top:649.15px;font-size:6.85px;line-height:8.90px;color:#222;">ID</span>
<span class="t" style="left:829.60px;top:649.15px;font-size:6.85px;line-height:8.90px;color:#222;">15089</span>
<div style="left:824.60px;top:593.80px;width:0.80px;height:65.40px;background:#e0e0e0;"></div>
<div style="left:753.40px;top:660.40px;width:405.60px;height:12.80px;background:#d3d3d3;"></div>
<div style="left:753.00px;top:661.00px;width:72.40px;height:14.00px;background:#ececec;border:1px solid #c2c2c2;border-bottom:none;border-radius:2px 2px 0 0;"></div>
<svg class="i" style="left:761.40px;top:664.00px;" width="9.20" height="9.00"><use href="#ti-props"/></svg>
<span class="t" style="left:774.00px;top:663.62px;font-size:7.2px;line-height:9.36px;color:#1a1a1a;font-weight:bold;transform:scaleX(1.0123);transform-origin:0 50%;">Properties</span>
<svg class="i" style="left:817.2px;top:663.6px" width="5.4" height="5.4"><rect x="0.3" y="0.3" width="4.8" height="4.8" rx="0.8" fill="#eee" stroke="#bbb" stroke-width="0.5"/><path d="M1.5 1.5 L3.9 3.9 M3.9 1.5 L1.5 3.9" stroke="#777" stroke-width="0.6"/></svg>
<div style="left:1157.60px;top:40.30px;width:1.40px;height:85.20px;background:#fff;"></div>
</div>
</body></html>
